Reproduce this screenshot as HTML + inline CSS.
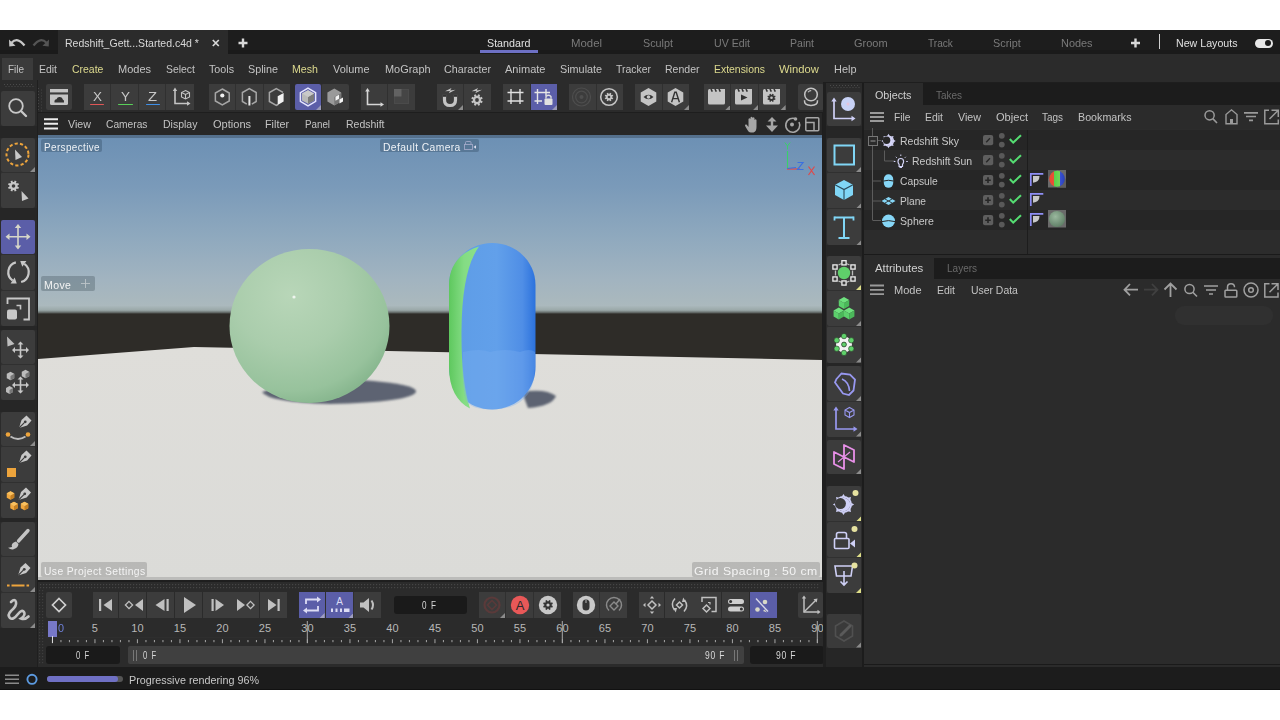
<!DOCTYPE html><html><head><meta charset="utf-8"><style>
*{margin:0;padding:0;box-sizing:border-box}
html,body{width:1280px;height:720px;overflow:hidden;background:#fff;font-family:"Liberation Sans",sans-serif}
#r{position:absolute;left:0;top:0;width:1280px;height:720px}
#r div{position:absolute}
.t{white-space:nowrap;line-height:1;transform-origin:0 0}
</style></head><body><div id="r"><div style="left:0px;top:30px;width:1280px;height:660px;background:#2b2b2b;"></div>
<div style="left:0px;top:30px;width:1280px;height:24px;background:#1d1d1d;"></div>
<div style="left:0px;top:50px;width:1280px;height:4px;background:#1a1a1a;"></div>
<div style="left:58px;top:30px;width:170px;height:24px;background:#2b2b2b;"></div>
<div class="t" style="left:65.00px;top:38.27px;color:#d8d8d8;font-size:11.5px;transform:scaleX(0.915);">Redshift_Gett...Started.c4d *</div>
<div style="left:0px;top:54px;width:1280px;height:26px;background:#2b2b2b;"></div>
<div style="left:2px;top:58px;width:31px;height:22px;background:#3b3b3b;"></div>
<div class="t" style="left:8.00px;top:64.27px;color:#c3c3c3;font-size:11.5px;transform:scaleX(0.865);">File</div>
<div class="t" style="left:39.00px;top:64.27px;color:#c3c3c3;font-size:11.5px;transform:scaleX(0.909);">Edit</div>
<div class="t" style="left:72.00px;top:64.27px;color:#dcd98e;font-size:11.5px;transform:scaleX(0.910);">Create</div>
<div class="t" style="left:118.00px;top:64.27px;color:#c3c3c3;font-size:11.5px;transform:scaleX(0.957);">Modes</div>
<div class="t" style="left:166.00px;top:64.27px;color:#c3c3c3;font-size:11.5px;transform:scaleX(0.906);">Select</div>
<div class="t" style="left:209.00px;top:64.27px;color:#c3c3c3;font-size:11.5px;transform:scaleX(0.933);">Tools</div>
<div class="t" style="left:248.00px;top:64.27px;color:#c3c3c3;font-size:11.5px;transform:scaleX(0.938);">Spline</div>
<div class="t" style="left:292.00px;top:64.27px;color:#dcd98e;font-size:11.5px;transform:scaleX(0.925);">Mesh</div>
<div class="t" style="left:333.00px;top:64.27px;color:#c3c3c3;font-size:11.5px;transform:scaleX(0.951);">Volume</div>
<div class="t" style="left:384.50px;top:64.27px;color:#c3c3c3;font-size:11.5px;transform:scaleX(0.950);">MoGraph</div>
<div class="t" style="left:444.00px;top:64.27px;color:#c3c3c3;font-size:11.5px;transform:scaleX(0.931);">Character</div>
<div class="t" style="left:505.00px;top:64.27px;color:#c3c3c3;font-size:11.5px;transform:scaleX(0.960);">Animate</div>
<div class="t" style="left:560.00px;top:64.27px;color:#c3c3c3;font-size:11.5px;transform:scaleX(0.940);">Simulate</div>
<div class="t" style="left:616.00px;top:64.27px;color:#c3c3c3;font-size:11.5px;transform:scaleX(0.909);">Tracker</div>
<div class="t" style="left:665.00px;top:64.27px;color:#c3c3c3;font-size:11.5px;transform:scaleX(0.915);">Render</div>
<div class="t" style="left:714.00px;top:64.27px;color:#dcd98e;font-size:11.5px;transform:scaleX(0.906);">Extensions</div>
<div class="t" style="left:779.00px;top:64.27px;color:#dcd98e;font-size:11.5px;transform:scaleX(0.976);">Window</div>
<div class="t" style="left:834.00px;top:64.27px;color:#c3c3c3;font-size:11.5px;transform:scaleX(0.949);">Help</div>
<div class="t" style="left:487.00px;top:38.27px;color:#e0e0e0;font-size:11.5px;transform:scaleX(0.931);">Standard</div>
<div class="t" style="left:571.00px;top:38.27px;color:#7a7a7a;font-size:11.5px;transform:scaleX(0.990);">Model</div>
<div class="t" style="left:643.00px;top:38.27px;color:#7a7a7a;font-size:11.5px;transform:scaleX(0.938);">Sculpt</div>
<div class="t" style="left:714.00px;top:38.27px;color:#7a7a7a;font-size:11.5px;transform:scaleX(0.923);">UV Edit</div>
<div class="t" style="left:790.00px;top:38.27px;color:#7a7a7a;font-size:11.5px;transform:scaleX(0.916);">Paint</div>
<div class="t" style="left:854.00px;top:38.27px;color:#7a7a7a;font-size:11.5px;transform:scaleX(0.954);">Groom</div>
<div class="t" style="left:928.00px;top:38.27px;color:#7a7a7a;font-size:11.5px;transform:scaleX(0.880);">Track</div>
<div class="t" style="left:993.00px;top:38.27px;color:#7a7a7a;font-size:11.5px;transform:scaleX(0.944);">Script</div>
<div class="t" style="left:1061.00px;top:38.27px;color:#7a7a7a;font-size:11.5px;transform:scaleX(0.949);">Nodes</div>
<div class="t" style="left:1175.50px;top:38.27px;color:#e0e0e0;font-size:11.5px;transform:scaleX(0.925);">New Layouts</div>
<div style="left:480px;top:50px;width:58px;height:3px;background:#6d70c4;"></div>
<div style="left:0px;top:80px;width:826px;height:33px;background:#2b2b2b;"></div>
<div style="left:46px;top:84px;width:26px;height:26px;background:#3c3c3c;border-radius:2px"></div>
<svg style="position:absolute;left:46px;top:84px;overflow:visible" width="26" height="26" viewBox="0 0 26 26"><rect x="4" y="5" width="18" height="3.4" fill="#c4c4c4"/><path d="M4 10.5H22V19.5Q22 21 20.5 21H5.5Q4 21 4 19.5Z" fill="#c4c4c4"/><path d="M8.5 18.5Q8 15.5 10.5 15.3Q11.5 12.5 14 13Q16.5 13.3 16.8 15.5Q18.5 15.8 18 18.5Z" fill="#333"/></svg>
<div style="left:84px;top:84px;width:26.5px;height:26px;background:#3c3c3c;border-radius:0px"></div>
<div style="left:110.5px;top:84px;width:27.5px;height:26px;background:#3c3c3c;border-radius:0px"></div>
<div style="left:138px;top:84px;width:27.5px;height:26px;background:#3c3c3c;border-radius:0px"></div>
<div style="left:165.5px;top:84px;width:28.5px;height:26px;background:#3c3c3c;border-radius:0px"></div>
<div style="left:84px;top:84px;width:110px;height:26px;border-radius:2px;overflow:hidden"></div>
<div class="t" style="left:92.50px;top:90.00px;color:#c8c8c8;font-size:13px;transform:scaleX(1.034);">X</div>
<div class="t" style="left:120.50px;top:90.00px;color:#c8c8c8;font-size:13px;transform:scaleX(1.034);">Y</div>
<div class="t" style="left:148.00px;top:90.00px;color:#c8c8c8;font-size:13px;transform:scaleX(1.139);">Z</div>
<div style="left:89.5px;top:103.7px;width:14.5px;height:1.8px;background:#e05656;border-radius:1px"></div>
<div style="left:117.5px;top:103.7px;width:15px;height:1.8px;background:#59cf59;border-radius:1px"></div>
<div style="left:145.5px;top:103.7px;width:14.5px;height:1.8px;background:#3f8fe6;border-radius:1px"></div>
<svg style="position:absolute;left:165.5px;top:84px;overflow:visible" width="28" height="26" viewBox="0 0 28 26"><path d="M9 5V19.5H23" fill="none" stroke="#c4c4c4" stroke-width="1.6"/><path d="M9 3.5L6.8 7H11.2Z M24.5 19.5L21 17.3V21.7Z" fill="#c4c4c4"/><path d="M19.5 6.5L23.5 8.5V13L19.5 15L15.5 13V8.5Z M15.5 8.5L19.5 10.5L23.5 8.5 M19.5 10.5V15" fill="none" stroke="#c4c4c4" stroke-width="1.1"/></svg>
<div style="left:209px;top:84px;width:26.69999999999999px;height:26px;background:#3c3c3c;border-radius:0px"></div>
<div style="left:235.7px;top:84px;width:27.30000000000001px;height:26px;background:#3c3c3c;border-radius:0px"></div>
<div style="left:263px;top:84px;width:27.30000000000001px;height:26px;background:#3c3c3c;border-radius:0px"></div>
<div style="left:295px;top:84px;width:26px;height:26px;background:#5b5ea8;border-radius:2px"></div>
<svg style="position:absolute;left:295px;top:84px" width="26" height="26"><path d="M26 21L26 26L21 26Z" fill="#9a9ab8"/></svg>
<div style="left:321px;top:84px;width:28px;height:26px;background:#3c3c3c;border-radius:2px"></div>
<svg style="position:absolute;left:209px;top:84px;overflow:visible" width="27" height="26" viewBox="0 0 27 26"><path d="M13.30 5.00L20.23 9.00L20.23 17.00L13.30 21.00L6.37 17.00L6.37 9.00Z" fill="none" stroke="#a6a6a6" stroke-width="1.5"/><circle cx="13.3" cy="11.5" r="2.1" fill="#f0f0f0"/></svg>
<svg style="position:absolute;left:235.7px;top:84px;overflow:visible" width="27" height="26" viewBox="0 0 27 26"><path d="M10.8 20.2L6.4 17.5V8.5L13.3 4.5L20.2 8.5V17.5L15.8 20.2" fill="none" stroke="#a6a6a6" stroke-width="1.5"/><rect x="12.4" y="12" width="2" height="9.5" fill="#e8e8e8"/></svg>
<svg style="position:absolute;left:263px;top:84px;overflow:visible" width="27" height="26" viewBox="0 0 27 26"><path d="M15 20.5L13.3 21.5L6.4 17.5V8.5L13.3 4.5L20 8.4" fill="none" stroke="#a6a6a6" stroke-width="1.5"/><path d="M14.7 12.2L20.6 9V17.6L14.7 21Z" fill="#f2f2f2"/></svg>
<svg style="position:absolute;left:295px;top:84px;overflow:visible" width="26" height="26" viewBox="0 0 26 26"><path d="M13.00 4.20L20.62 8.60L20.62 17.40L13.00 21.80L5.38 17.40L5.38 8.60Z" fill="none" stroke="#e6e6ff" stroke-width="1.5"/><path d="M13 6.2L19 9.6V16.4L13 19.8L7 16.4V9.6Z" fill="#b9b9b9"/><path d="M13 13L19 9.6V16.4L13 19.8Z" fill="#7b7b7b"/><path d="M13 13L7 9.6L13 6.2L19 9.6Z" fill="#c9c9c9"/></svg>
<svg style="position:absolute;left:321px;top:84px;overflow:visible" width="28" height="26" viewBox="0 0 28 26"><path d="M13.3 4.5L20.2 8.5V17.5L13.3 21.5L6.4 17.5V8.5Z" fill="#9a9a9a"/><path d="M13.3 13L20.2 9V17.5L13.3 21.5Z" fill="#777"/><path d="M14.5 12.8L18 10.8V14.8L14.5 16.8Z M18.5 15.5L22 13.5V17.5L18.5 19.5Z" fill="#f4f4f4"/></svg>
<div style="left:361px;top:84px;width:26.600000000000023px;height:26px;background:#3c3c3c;border-radius:0px"></div>
<div style="left:387.6px;top:84px;width:27.19999999999999px;height:26px;background:#3c3c3c;border-radius:0px"></div>
<svg style="position:absolute;left:361px;top:84px;overflow:visible" width="27" height="26" viewBox="0 0 27 26"><path d="M6.5 6V20.5H21" fill="none" stroke="#d6d6d6" stroke-width="1.6"/><path d="M6.5 4L4.2 7.5H8.8Z M23 20.5L19.5 18.2V22.8Z" fill="#d6d6d6"/></svg>
<svg style="position:absolute;left:387.6px;top:84px;overflow:visible" width="27" height="26" viewBox="0 0 27 26"><rect x="6.5" y="5.5" width="14" height="14" fill="#454545" stroke="#4b4b4b"/><rect x="6" y="5" width="7.5" height="7.5" fill="#626262"/></svg>
<div style="left:437px;top:84px;width:26px;height:26px;background:#3c3c3c;border-radius:0px"></div>
<svg style="position:absolute;left:437px;top:84px" width="26" height="26"><path d="M26 21L26 26L21 26Z" fill="#8c8c8c"/></svg>
<div style="left:463px;top:84px;width:27.80000000000001px;height:26px;background:#3c3c3c;border-radius:0px"></div>
<svg style="position:absolute;left:437px;top:84px;overflow:visible" width="26" height="26" viewBox="0 0 26 26"><path d="M7.5 10.5V16Q7.5 21.5 13 21.5Q18.5 21.5 18.5 16V10.5" fill="none" stroke="#c4c4c4" stroke-width="3.2"/><rect x="5.9" y="10.2" width="3.2" height="2.6" fill="#333"/><rect x="16.9" y="10.2" width="3.2" height="2.6" fill="#333"/><path d="M8 7.2L14.5 4L13.2 6.6L18.5 5.8L11.8 9.2L13 6.9Z" fill="#c4c4c4"/></svg>
<svg style="position:absolute;left:463px;top:84px;overflow:visible" width="28" height="26" viewBox="0 0 28 26"><path d="M14.00 11.80L14.64 11.85L15.24 10.33L17.13 11.12L16.48 12.61L16.97 13.03L17.39 13.52L18.88 12.87L19.67 14.76L18.15 15.36L18.20 16.00L18.15 16.64L19.67 17.24L18.88 19.13L17.39 18.48L16.97 18.97L16.48 19.39L17.13 20.88L15.24 21.67L14.64 20.15L14.00 20.20L13.36 20.15L12.76 21.67L10.87 20.88L11.52 19.39L11.03 18.97L10.61 18.48L9.12 19.13L8.33 17.24L9.85 16.64L9.80 16.00L9.85 15.36L8.33 14.76L9.12 12.87L10.61 13.52L11.03 13.03L11.52 12.61L10.87 11.12L12.76 10.33L13.36 11.85Z" fill="#c4c4c4"/><circle cx="14" cy="16" r="1.9" fill="#3c3c3c"/><path d="M8.5 7.2L15 4L13.7 6.6L19 5.8L12.3 9.2L13.5 6.9Z" fill="#c4c4c4"/></svg>
<div style="left:503px;top:84px;width:27px;height:26px;background:#3c3c3c;border-radius:0px"></div>
<div style="left:530px;top:84px;width:27px;height:26px;background:#5b5ea8;border-radius:0px"></div>
<svg style="position:absolute;left:530px;top:84px" width="27" height="26"><path d="M27 21L27 26L22 26Z" fill="#9a9ab8"/></svg>
<svg style="position:absolute;left:503px;top:84px;overflow:visible" width="27" height="26" viewBox="0 0 27 26"><path d="M8 5V20 M17 5V20 M4.5 8.5H20.5 M4.5 17H20.5" stroke="#e0e0e0" stroke-width="1.4"/></svg>
<svg style="position:absolute;left:530px;top:84px;overflow:visible" width="27" height="26" viewBox="0 0 27 26"><path d="M7.5 5V20 M16 5V12 M4.5 8.5H20 M4.5 17H12" stroke="#e6e6e6" stroke-width="1.4"/><rect x="14.5" y="14.5" width="8" height="6.5" rx="1" fill="#e0e0e0"/><path d="M16 14.5V12.5Q18.5 10 21 12.5V14.5" fill="none" stroke="#e0e0e0" stroke-width="1.3"/></svg>
<div style="left:569px;top:84px;width:27px;height:26px;background:#3c3c3c;border-radius:0px"></div>
<div style="left:596px;top:84px;width:27px;height:26px;background:#3c3c3c;border-radius:0px"></div>
<svg style="position:absolute;left:569px;top:84px;overflow:visible" width="27" height="26" viewBox="0 0 27 26"><circle cx="12.5" cy="13" r="9" fill="none" stroke="#4e4e4e" stroke-width="1.2"/><circle cx="12.5" cy="13" r="5.8" fill="none" stroke="#4e4e4e" stroke-width="1.2"/><circle cx="12.5" cy="13" r="2" fill="#4e4e4e"/></svg>
<svg style="position:absolute;left:596px;top:84px;overflow:visible" width="27" height="26" viewBox="0 0 27 26"><circle cx="13" cy="13" r="8.3" fill="none" stroke="#c4c4c4" stroke-width="1.6"/><path d="M13.00 9.80L13.49 9.84L13.94 8.70L15.37 9.29L14.89 10.42L15.26 10.74L15.58 11.11L16.71 10.63L17.30 12.06L16.16 12.51L16.20 13.00L16.16 13.49L17.30 13.94L16.71 15.37L15.58 14.89L15.26 15.26L14.89 15.58L15.37 16.71L13.94 17.30L13.49 16.16L13.00 16.20L12.51 16.16L12.06 17.30L10.63 16.71L11.11 15.58L10.74 15.26L10.42 14.89L9.29 15.37L8.70 13.94L9.84 13.49L9.80 13.00L9.84 12.51L8.70 12.06L9.29 10.63L10.42 11.11L10.74 10.74L11.11 10.42L10.63 9.29L12.06 8.70L12.51 9.84Z" fill="#c4c4c4"/><circle cx="13" cy="13" r="1.3" fill="#3c3c3c"/></svg>
<div style="left:635px;top:84px;width:27px;height:26px;background:#3c3c3c;border-radius:0px"></div>
<div style="left:662px;top:84px;width:27px;height:26px;background:#3c3c3c;border-radius:0px"></div>
<svg style="position:absolute;left:662px;top:84px" width="27" height="26"><path d="M27 21L27 26L22 26Z" fill="#8c8c8c"/></svg>
<svg style="position:absolute;left:635px;top:84px;overflow:visible" width="27" height="26" viewBox="0 0 27 26"><path d="M13.50 4.00L21.29 8.50L21.29 17.50L13.50 22.00L5.71 17.50L5.71 8.50Z" fill="#c4c4c4"/><path d="M8.5 13Q13.5 8.5 18.5 13Q13.5 17.5 8.5 13Z" fill="#333"/><circle cx="13.5" cy="13" r="1.8" fill="#c4c4c4"/></svg>
<svg style="position:absolute;left:662px;top:84px;overflow:visible" width="27" height="26" viewBox="0 0 27 26"><path d="M13.50 4.00L21.29 8.50L21.29 17.50L13.50 22.00L5.71 17.50L5.71 8.50Z" fill="#c4c4c4"/><path d="M9.6 18.3L12.8 8.2H14.2L17.4 18.3 M10.9 14.6H16.1" fill="none" stroke="#333" stroke-width="1.4"/></svg>
<div style="left:704px;top:84px;width:26.299999999999955px;height:26px;background:#3c3c3c;border-radius:0px"></div>
<svg style="position:absolute;left:704px;top:84px" width="26.299999999999955" height="26"><path d="M26.299999999999955 21L26.299999999999955 26L21.299999999999955 26Z" fill="#8c8c8c"/></svg>
<div style="left:730.3px;top:84px;width:28.100000000000023px;height:26px;background:#3c3c3c;border-radius:0px"></div>
<svg style="position:absolute;left:730.3px;top:84px" width="28.100000000000023" height="26"><path d="M28.100000000000023 21L28.100000000000023 26L23.100000000000023 26Z" fill="#8c8c8c"/></svg>
<div style="left:758.4px;top:84px;width:27.600000000000023px;height:26px;background:#3c3c3c;border-radius:0px"></div>
<svg style="position:absolute;left:758.4px;top:84px" width="27.600000000000023" height="26"><path d="M27.600000000000023 21L27.600000000000023 26L22.600000000000023 26Z" fill="#8c8c8c"/></svg>
<svg style="position:absolute;left:704px;top:84px;overflow:visible" width="26" height="26" viewBox="0 0 26 26"><path d="M4 6.5Q4 5 5.5 5H21V19Q21 20.5 19.5 20.5H5.5Q4 20.5 4 19Z" fill="#c4c4c4"/><path d="M7 5L8.3 7.6 M11 5L12.3 7.6 M15 5L16.3 7.6" stroke="#333" stroke-width="1.6"/></svg>
<svg style="position:absolute;left:731px;top:84px;overflow:visible" width="26" height="26" viewBox="0 0 26 26"><path d="M4 6.5Q4 5 5.5 5H21V19Q21 20.5 19.5 20.5H5.5Q4 20.5 4 19Z" fill="#c4c4c4"/><path d="M7 5L8.3 7.6 M11 5L12.3 7.6 M15 5L16.3 7.6" stroke="#333" stroke-width="1.6"/><path d="M10 10.5L16.5 13.5L10 16.5Z" fill="#333"/></svg>
<svg style="position:absolute;left:759px;top:84px;overflow:visible" width="26" height="26" viewBox="0 0 26 26"><path d="M4 6.5Q4 5 5.5 5H21V19Q21 20.5 19.5 20.5H5.5Q4 20.5 4 19Z" fill="#c4c4c4"/><path d="M7 5L8.3 7.6 M11 5L12.3 7.6 M15 5L16.3 7.6" stroke="#333" stroke-width="1.6"/><path d="M12.50 10.70L12.97 10.74L13.40 9.70L14.76 10.26L14.33 11.30L14.69 11.61L15.00 11.97L16.04 11.54L16.60 12.90L15.56 13.33L15.60 13.80L15.56 14.27L16.60 14.70L16.04 16.06L15.00 15.63L14.69 15.99L14.33 16.30L14.76 17.34L13.40 17.90L12.97 16.86L12.50 16.90L12.03 16.86L11.60 17.90L10.24 17.34L10.67 16.30L10.31 15.99L10.00 15.63L8.96 16.06L8.40 14.70L9.44 14.27L9.40 13.80L9.44 13.33L8.40 12.90L8.96 11.54L10.00 11.97L10.31 11.61L10.67 11.30L10.24 10.26L11.60 9.70L12.03 10.74Z" fill="#333"/><circle cx="12.5" cy="13.8" r="1.3" fill="#c4c4c4"/></svg>
<div style="left:798px;top:84px;width:26px;height:26px;background:#3c3c3c;border-radius:2px"></div>
<svg style="position:absolute;left:798px;top:84px;overflow:visible" width="26" height="26" viewBox="0 0 26 26"><circle cx="13" cy="10.5" r="6.3" fill="none" stroke="#c4c4c4" stroke-width="1.5"/><path d="M10 8.3Q11.2 6.5 13.2 6.6" fill="none" stroke="#c4c4c4" stroke-width="1.1"/><path d="M6.5 16.3Q6 21.5 13 21.5Q20 21.5 19.5 16.3" fill="none" stroke="#c4c4c4" stroke-width="1.5"/></svg>
<div style="left:0px;top:80px;width:37px;height:587px;background:#2b2b2b;"></div>
<div style="left:823px;top:80px;width:40px;height:587px;background:#2b2b2b;"></div>
<div style="left:0px;top:126px;width:37px;height:11.5px;background:#262626;"></div>
<div style="left:0px;top:208px;width:37px;height:12px;background:#262626;"></div>
<div style="left:0px;top:326px;width:37px;height:4px;background:#262626;"></div>
<div style="left:0px;top:400px;width:37px;height:11.5px;background:#262626;"></div>
<div style="left:0px;top:518px;width:37px;height:3.5px;background:#262626;"></div>
<div style="left:0px;top:628px;width:37px;height:39px;background:#262626;"></div>
<div style="left:823px;top:80px;width:40px;height:2.5px;background:#2b2b2b;"></div>
<div style="left:826px;top:126px;width:36px;height:11.5px;background:#262626;"></div>
<div style="left:826px;top:245px;width:36px;height:10.5px;background:#262626;"></div>
<div style="left:826px;top:362.5px;width:36px;height:3.5px;background:#262626;"></div>
<div style="left:826px;top:474px;width:36px;height:12px;background:#262626;"></div>
<div style="left:826px;top:593px;width:36px;height:21px;background:#262626;"></div>
<div style="left:826px;top:647.5px;width:36px;height:19.5px;background:#262626;"></div>
<div style="left:1px;top:91px;width:34px;height:35px;background:#3c3c3c;border-radius:2px"></div>
<svg style="position:absolute;left:1px;top:91px;overflow:visible" width="34" height="35" viewBox="0 0 34 35"><circle cx="15" cy="15" r="6.8" fill="none" stroke="#c8c8c8" stroke-width="1.8"/><path d="M20 20L25 25" stroke="#c8c8c8" stroke-width="2.4" stroke-linecap="round"/></svg>
<div style="left:1px;top:138px;width:34px;height:34px;background:#3c3c3c;border-radius:2px"></div>
<svg style="position:absolute;left:1px;top:138px" width="34" height="34"><path d="M34 29L34 34L29 34Z" fill="#8c8c8c"/></svg>
<div style="left:1px;top:172px;width:34px;height:36px;background:#3c3c3c;border-radius:2px"></div>
<svg style="position:absolute;left:1px;top:138px;overflow:visible" width="34" height="34" viewBox="0 0 34 34"><circle cx="16.5" cy="16.5" r="11" fill="none" stroke="#eda43c" stroke-width="2" stroke-dasharray="3.2 2.2"/><path d="M14 11.5L21 19L14.5 22Z" fill="#c8c8c8"/></svg>
<svg style="position:absolute;left:1px;top:172px;overflow:visible" width="34" height="36" viewBox="0 0 34 36"><path d="M12.50 9.90L13.13 9.95L13.70 8.53L15.52 9.28L14.92 10.69L15.40 11.10L15.81 11.58L17.22 10.98L17.97 12.80L16.55 13.37L16.60 14.00L16.55 14.63L17.97 15.20L17.22 17.02L15.81 16.42L15.40 16.90L14.92 17.31L15.52 18.72L13.70 19.47L13.13 18.05L12.50 18.10L11.87 18.05L11.30 19.47L9.48 18.72L10.08 17.31L9.60 16.90L9.19 16.42L7.78 17.02L7.03 15.20L8.45 14.63L8.40 14.00L8.45 13.37L7.03 12.80L7.78 10.98L9.19 11.58L9.60 11.10L10.08 10.69L9.48 9.28L11.30 8.53L11.87 9.95Z" fill="#c8c8c8"/><circle cx="12.5" cy="14" r="1.8" fill="#3c3c3c"/><path d="M20.5 19L27.5 26.5L21 29Z" fill="#c8c8c8"/></svg>
<div style="left:1px;top:220px;width:34px;height:34px;background:#5b5ea8;border-radius:2px"></div>
<div style="left:1px;top:254px;width:34px;height:36px;background:#3c3c3c;border-radius:2px"></div>
<div style="left:1px;top:290px;width:34px;height:36px;background:#3c3c3c;border-radius:2px"></div>
<svg style="position:absolute;left:1px;top:220px;overflow:visible" width="34" height="34" viewBox="0 0 34 34"><path d="M17 6V28 M6 16.8H28" stroke="#d6d6c8" stroke-width="1.6"/><path d="M17 4L13.8 8H20.2Z M17 29.5L13.8 25.5H20.2Z M4.5 16.8L8.5 13.6V20Z M29.5 16.8L25.5 13.6V20Z" fill="#d6d6c8"/></svg>
<svg style="position:absolute;left:1px;top:254px;overflow:visible" width="34" height="36" viewBox="0 0 34 36"><path d="M14.86 8.35A10.2 10.2 0 0 0 11.65 26.56 M20.14 28.05A10.2 10.2 0 0 0 23.35 9.84" fill="none" stroke="#c8c8c8" stroke-width="2.2"/><path d="M15.75 29.42L9.58 29.50L13.71 23.61Z M19.25 6.98L25.42 6.90L21.29 12.79Z" fill="#c8c8c8"/></svg>
<svg style="position:absolute;left:1px;top:290px;overflow:visible" width="34" height="36" viewBox="0 0 34 36"><path d="M6.5 14V8.5H28V29.5H22.5" fill="none" stroke="#c8c8c8" stroke-width="1.8"/><path d="M15.5 15.5H19.5V19.5" fill="none" stroke="#c8c8c8" stroke-width="1.6"/><rect x="6" y="19.5" width="10" height="10" rx="2" fill="#c8c8c8"/></svg>
<div style="left:1px;top:330px;width:34px;height:34px;background:#3c3c3c;border-radius:2px"></div>
<div style="left:1px;top:364px;width:34px;height:36px;background:#3c3c3c;border-radius:2px"></div>
<svg style="position:absolute;left:1px;top:330px;overflow:visible" width="34" height="34" viewBox="0 0 34 34"><path d="M6 6.5L13.5 14L6.5 16.5Z" fill="#bdbdbd"/><path d="M19.5 13.5V26.5 M13.0 20H26.0" stroke="#c8c8c8" stroke-width="1.6"/><path d="M19.5 11.5L16.5 14.5H22.5Z M19.5 28.5L16.5 25.5H22.5Z M11.0 20L14.0 17V23Z M28.0 20L25.0 17V23Z" fill="#c8c8c8"/></svg>
<svg style="position:absolute;left:1px;top:364px;overflow:visible" width="34" height="36" viewBox="0 0 34 36"><path d="M9.5 7.7L13.241 9.85V14.15L9.5 16.3L5.759 14.15V9.85Z" fill="#bcbcbc"/><path d="M9.5 12L13.241 9.85V14.15L9.5 16.3Z" fill="#777"/><path d="M24.5 5.7L28.241 7.85V12.15L24.5 14.3L20.759 12.15V7.85Z" fill="#bcbcbc"/><path d="M24.5 10L28.241 7.85V12.15L24.5 14.3Z" fill="#777"/><path d="M8.5 22L11.98 24.0V28.0L8.5 30L5.02 28.0V24.0Z" fill="#bcbcbc"/><path d="M8.5 26L11.98 24.0V28.0L8.5 30Z" fill="#777"/><path d="M19.5 14.5V27.5 M13.0 21H26.0" stroke="#c8c8c8" stroke-width="1.6"/><path d="M19.5 12.5L16.5 15.5H22.5Z M19.5 29.5L16.5 26.5H22.5Z M11.0 21L14.0 18V24Z M28.0 21L25.0 18V24Z" fill="#c8c8c8"/></svg>
<div style="left:1px;top:412px;width:34px;height:34px;background:#3c3c3c;border-radius:2px"></div>
<svg style="position:absolute;left:1px;top:412px" width="34" height="34"><path d="M34 29L34 34L29 34Z" fill="#8c8c8c"/></svg>
<div style="left:1px;top:446px;width:34px;height:36px;background:#3c3c3c;border-radius:2px"></div>
<div style="left:1px;top:482px;width:34px;height:36px;background:#3c3c3c;border-radius:2px"></div>
<svg style="position:absolute;left:1px;top:412px;overflow:visible" width="34" height="34" viewBox="0 0 34 34"><g transform="translate(18 16) scale(1.25)"><path d="M0 0L2 -6.5L6 -10L10 -6L6.5 -2Z" fill="#c8c8c8"/><path d="M0 0L4.5 -4.5" stroke="#3c3c3c" stroke-width="0.9"/><circle cx="5" cy="-5" r="1.1" fill="#3c3c3c"/></g><circle cx="7" cy="22.5" r="2.3" fill="#eda43c"/><circle cx="27" cy="22.5" r="2.3" fill="#eda43c"/><path d="M9.5 24.5Q17 29.5 24.5 24.5" fill="none" stroke="#bdbdbd" stroke-width="1.8"/></svg>
<svg style="position:absolute;left:1px;top:446px;overflow:visible" width="34" height="36" viewBox="0 0 34 36"><g transform="translate(18 17) scale(1.25)"><path d="M0 0L2 -6.5L6 -10L10 -6L6.5 -2Z" fill="#c8c8c8"/><path d="M0 0L4.5 -4.5" stroke="#3c3c3c" stroke-width="0.9"/><circle cx="5" cy="-5" r="1.1" fill="#3c3c3c"/></g><rect x="6" y="22" width="9" height="9" fill="#eda43c"/></svg>
<svg style="position:absolute;left:1px;top:482px;overflow:visible" width="34" height="36" viewBox="0 0 34 36"><path d="M9.5 9.2L13.241 11.35V15.65L9.5 17.8L5.759 15.65V11.35Z" fill="#f0a840"/><path d="M9.5 13.5L13.241 11.35V15.65L9.5 17.8Z" fill="#c47f22"/><path d="M9.5 13.5L13.241 11.35L9.5 9.2L5.759 11.35Z" fill="#f8c060"/><path d="M13 19.7L16.741 21.85V26.15L13 28.3L9.259 26.15V21.85Z" fill="#f0a840"/><path d="M13 24L16.741 21.85V26.15L13 28.3Z" fill="#c47f22"/><path d="M13 24L16.741 21.85L13 19.7L9.259 21.85Z" fill="#f8c060"/><path d="M23.5 19.7L27.241 21.85V26.15L23.5 28.3L19.759 26.15V21.85Z" fill="#f0a840"/><path d="M23.5 24L27.241 21.85V26.15L23.5 28.3Z" fill="#c47f22"/><path d="M23.5 24L27.241 21.85L23.5 19.7L19.759 21.85Z" fill="#f8c060"/><g transform="translate(17.5 18) scale(1.25)"><path d="M0 0L2 -6.5L6 -10L10 -6L6.5 -2Z" fill="#c8c8c8"/><path d="M0 0L4.5 -4.5" stroke="#3c3c3c" stroke-width="0.9"/><circle cx="5" cy="-5" r="1.1" fill="#3c3c3c"/></g></svg>
<div style="left:1px;top:522px;width:34px;height:34px;background:#3c3c3c;border-radius:2px"></div>
<div style="left:1px;top:556px;width:34px;height:36px;background:#3c3c3c;border-radius:2px"></div>
<svg style="position:absolute;left:1px;top:556px" width="34" height="36"><path d="M34 31L34 36L29 36Z" fill="#8c8c8c"/></svg>
<div style="left:1px;top:592px;width:34px;height:36px;background:#3c3c3c;border-radius:2px"></div>
<svg style="position:absolute;left:1px;top:592px" width="34" height="36"><path d="M34 31L34 36L29 36Z" fill="#8c8c8c"/></svg>
<svg style="position:absolute;left:1px;top:522px;overflow:visible" width="34" height="34" viewBox="0 0 34 34"><path d="M27 8.5L17.5 19" stroke="#c4c4c4" stroke-width="3.4" stroke-linecap="round"/><path d="M15 19.5Q9.5 21 11 25Q7.5 26 7 25.8Q10.5 28.5 13 27Q17 26 17.5 22Z" fill="#c4c4c4"/></svg>
<svg style="position:absolute;left:1px;top:556px;overflow:visible" width="34" height="36" viewBox="0 0 34 36"><g transform="translate(17 19.5) scale(1.25)"><path d="M0 0L2 -6.5L6 -10L10 -6L6.5 -2Z" fill="#c8c8c8"/><path d="M0 0L4.5 -4.5" stroke="#3c3c3c" stroke-width="0.9"/><circle cx="5" cy="-5" r="1.1" fill="#3c3c3c"/></g><rect x="6" y="28.5" width="2.6" height="2" fill="#eda43c"/><rect x="10.5" y="28.5" width="13" height="2" fill="#eda43c"/><rect x="25.5" y="28.5" width="2.6" height="2" fill="#eda43c"/></svg>
<svg style="position:absolute;left:1px;top:592px;overflow:visible" width="34" height="36" viewBox="0 0 34 36"><path d="M10 10Q14 6 15 10Q16 14 10 19Q6 23 9 26Q12 28.5 17 22Q21 17 23 20Q25 23 20 26.5Q24 28 27.5 24.5" fill="none" stroke="#c4c4c4" stroke-width="2.6" stroke-linecap="round"/></svg>
<div style="left:827px;top:92px;width:34px;height:34px;background:#3c3c3c;border-radius:2px"></div>
<svg style="position:absolute;left:827px;top:92px;overflow:visible" width="34" height="34" viewBox="0 0 34 34"><circle cx="21" cy="12" r="7" fill="#c8d2f6"/><circle cx="21" cy="12" r="1.5" fill="#e4c4dc"/><path d="M7 8V26.5H26" fill="none" stroke="#cfd0f6" stroke-width="1.7"/><path d="M7 5.5L4.3 9.5H9.7Z M28.5 26.5L24.5 23.8V29.2Z" fill="#cfd0f6"/></svg>
<div style="left:827px;top:138px;width:34px;height:34px;background:#3c3c3c;border-radius:2px"></div>
<svg style="position:absolute;left:827px;top:138px" width="34" height="34"><path d="M34 29L34 34L29 34Z" fill="#8c8c8c"/></svg>
<div style="left:827px;top:172px;width:34px;height:36.5px;background:#3c3c3c;border-radius:2px"></div>
<svg style="position:absolute;left:827px;top:172px" width="34" height="36.5"><path d="M34 31.5L34 36.5L29 36.5Z" fill="#8c8c8c"/></svg>
<div style="left:827px;top:208.5px;width:34px;height:36.5px;background:#3c3c3c;border-radius:2px"></div>
<svg style="position:absolute;left:827px;top:208.5px" width="34" height="36.5"><path d="M34 31.5L34 36.5L29 36.5Z" fill="#8c8c8c"/></svg>
<svg style="position:absolute;left:827px;top:138px;overflow:visible" width="34" height="34" viewBox="0 0 34 34"><rect x="7.5" y="7.5" width="19.5" height="19" fill="none" stroke="#80d6f6" stroke-width="2"/></svg>
<svg style="position:absolute;left:827px;top:172px;overflow:visible" width="34" height="36" viewBox="0 0 34 36"><path d="M17 8L26 12.8V23L17 28L8 23V12.8Z" fill="#80d6f6"/><path d="M8 12.8L17 17.6L26 12.8 M17 17.6V28" fill="none" stroke="#2a4a5a" stroke-width="1.1"/></svg>
<svg style="position:absolute;left:827px;top:208.5px;overflow:visible" width="34" height="36" viewBox="0 0 34 36"><path d="M7.5 8.5H26.5 M17 8.5V29 M11.5 29H22.5" stroke="#80d6f6" stroke-width="2"/><path d="M7.5 7.5V11.5 M26.5 7.5V11.5" stroke="#80d6f6" stroke-width="1.8"/></svg>
<div style="left:827px;top:256px;width:34px;height:34px;background:#3c3c3c;border-radius:2px"></div>
<svg style="position:absolute;left:827px;top:256px" width="34" height="34"><path d="M34 29L34 34L29 34Z" fill="#dede88"/></svg>
<div style="left:827px;top:290px;width:34px;height:36px;background:#3c3c3c;border-radius:2px"></div>
<svg style="position:absolute;left:827px;top:290px" width="34" height="36"><path d="M34 31L34 36L29 36Z" fill="#8c8c8c"/></svg>
<div style="left:827px;top:326px;width:34px;height:36.5px;background:#3c3c3c;border-radius:2px"></div>
<svg style="position:absolute;left:827px;top:326px" width="34" height="36.5"><path d="M34 31.5L34 36.5L29 36.5Z" fill="#8c8c8c"/></svg>
<svg style="position:absolute;left:827px;top:256px;overflow:visible" width="34" height="34" viewBox="0 0 34 34"><path d="M8.5 14.5V19.5 M25.5 14.5V19.5" stroke="#bdbdbd" stroke-width="1.3"/><path d="M11.5 9Q14 7.8 14.5 7.8 M22.5 9Q20 7.8 19.5 7.8 M11.5 25Q14 26.2 14.5 26.2 M22.5 25Q20 26.2 19.5 26.2" stroke="#bdbdbd" stroke-width="1.1" fill="none"/><circle cx="17" cy="17" r="6.2" fill="#5fd06a"/><rect x="14.9" y="4.699999999999999" width="4.2" height="4.2" fill="#3c3c3c" stroke="#f0f0f0" stroke-width="1.3"/><rect x="14.9" y="24.9" width="4.2" height="4.2" fill="#3c3c3c" stroke="#f0f0f0" stroke-width="1.3"/><rect x="5.9" y="8.9" width="4.2" height="4.2" fill="#3c3c3c" stroke="#f0f0f0" stroke-width="1.3"/><rect x="23.9" y="8.9" width="4.2" height="4.2" fill="#3c3c3c" stroke="#f0f0f0" stroke-width="1.3"/><rect x="5.9" y="20.9" width="4.2" height="4.2" fill="#3c3c3c" stroke="#f0f0f0" stroke-width="1.3"/><rect x="23.9" y="20.9" width="4.2" height="4.2" fill="#3c3c3c" stroke="#f0f0f0" stroke-width="1.3"/></svg>
<svg style="position:absolute;left:827px;top:290px;overflow:visible" width="34" height="36" viewBox="0 0 34 36"><path d="M17 7L22.22 10.0L17 13L11.780000000000001 10.0Z" fill="#6fe27e"/><path d="M11.780000000000001 10.0L17 13L17 19L11.780000000000001 16.0Z" fill="#5cd06c"/><path d="M17 13L22.22 10.0L22.22 16.0L17 19Z" fill="#4bb85a"/><path d="M11.8 17.5L17.02 20.5L11.8 23.5L6.580000000000001 20.5Z" fill="#6fe27e"/><path d="M6.580000000000001 20.5L11.8 23.5L11.8 29.5L6.580000000000001 26.5Z" fill="#5cd06c"/><path d="M11.8 23.5L17.02 20.5L17.02 26.5L11.8 29.5Z" fill="#4bb85a"/><path d="M22.2 17.5L27.419999999999998 20.5L22.2 23.5L16.98 20.5Z" fill="#6fe27e"/><path d="M16.98 20.5L22.2 23.5L22.2 29.5L16.98 26.5Z" fill="#5cd06c"/><path d="M22.2 23.5L27.419999999999998 20.5L27.419999999999998 26.5L22.2 29.5Z" fill="#4bb85a"/></svg>
<svg style="position:absolute;left:827px;top:326px;overflow:visible" width="34" height="36" viewBox="0 0 34 36"><path d="M17.00 12.20L18.12 12.30L19.12 10.58L22.80 12.70L21.81 14.43L22.46 15.35L22.93 16.37L24.92 16.38L24.92 20.62L22.93 20.63L22.46 21.65L21.81 22.57L22.80 24.30L19.12 26.42L18.12 24.70L17.00 24.80L15.88 24.70L14.88 26.42L11.20 24.30L12.19 22.57L11.54 21.65L11.07 20.63L9.08 20.62L9.08 16.38L11.07 16.37L11.54 15.35L12.19 14.43L11.20 12.70L14.88 10.58L15.88 12.30Z" fill="#f4f4f4"/><circle cx="17" cy="18.5" r="0.1" fill="#f4f4f4"/><circle cx="17.00" cy="10.10" r="2.7" fill="#5fd06a" stroke="#2a3a2a" stroke-width="0.6"/><circle cx="24.27" cy="14.30" r="2.7" fill="#5fd06a" stroke="#2a3a2a" stroke-width="0.6"/><circle cx="24.27" cy="22.70" r="2.7" fill="#5fd06a" stroke="#2a3a2a" stroke-width="0.6"/><circle cx="17.00" cy="26.90" r="2.7" fill="#5fd06a" stroke="#2a3a2a" stroke-width="0.6"/><circle cx="9.73" cy="22.70" r="2.7" fill="#5fd06a" stroke="#2a3a2a" stroke-width="0.6"/><circle cx="9.73" cy="14.30" r="2.7" fill="#5fd06a" stroke="#2a3a2a" stroke-width="0.6"/><circle cx="17" cy="18.5" r="2.4" fill="#5fd06a" stroke="#2a3a2a" stroke-width="0.8"/></svg>
<div style="left:827px;top:366px;width:34px;height:35px;background:#3c3c3c;border-radius:2px"></div>
<svg style="position:absolute;left:827px;top:366px" width="34" height="35"><path d="M34 30L34 35L29 35Z" fill="#8c8c8c"/></svg>
<div style="left:827px;top:401px;width:34px;height:35.5px;background:#3c3c3c;border-radius:2px"></div>
<svg style="position:absolute;left:827px;top:401px" width="34" height="35.5"><path d="M34 30.5L34 35.5L29 35.5Z" fill="#8c8c8c"/></svg>
<div style="left:827px;top:440px;width:34px;height:34px;background:#3c3c3c;border-radius:2px"></div>
<svg style="position:absolute;left:827px;top:440px" width="34" height="34"><path d="M34 29L34 34L29 34Z" fill="#8c8c8c"/></svg>
<svg style="position:absolute;left:827px;top:366px;overflow:visible" width="34" height="35" viewBox="0 0 34 35"><path d="M9.5 13L14.5 7.5L23 8.5L28 13.5L26.5 24.5L22 29L16 27.5L12 22L8 16.5Z" fill="none" stroke="#9898f0" stroke-width="1.8"/><path d="M15 13Q22 16 22.5 25" fill="none" stroke="#9898f0" stroke-width="1.6"/></svg>
<svg style="position:absolute;left:827px;top:401px;overflow:visible" width="34" height="35" viewBox="0 0 34 35"><path d="M9 8V28H28" fill="none" stroke="#9898f0" stroke-width="1.7"/><path d="M9 5.5L6.3 9.5H11.7Z M30.5 28L26.5 25.3V30.7Z" fill="#9898f0"/><path d="M22.5 6.5L27 9V14L22.5 16.5L18 14V9Z M18 9L22.5 11.5L27 9 M22.5 11.5V16.5" fill="none" stroke="#9898f0" stroke-width="1.1"/></svg>
<svg style="position:absolute;left:827px;top:440px;overflow:visible" width="34" height="34" viewBox="0 0 34 34"><path d="M7 12L17 17V29L7 24Z M17 5L27 10V22L17 17Z" fill="none" stroke="#e890e8" stroke-width="1.8" stroke-linejoin="round"/><path d="M11 22L23 12" stroke="#e890e8" stroke-width="1.1"/></svg>
<div style="left:827px;top:486px;width:34px;height:35.5px;background:#3c3c3c;border-radius:2px"></div>
<svg style="position:absolute;left:827px;top:486px" width="34" height="35.5"><path d="M34 30.5L34 35.5L29 35.5Z" fill="#dede88"/></svg>
<div style="left:827px;top:521.5px;width:34px;height:35.5px;background:#3c3c3c;border-radius:2px"></div>
<svg style="position:absolute;left:827px;top:521.5px" width="34" height="35.5"><path d="M34 30.5L34 35.5L29 35.5Z" fill="#dede88"/></svg>
<div style="left:827px;top:557px;width:34px;height:36px;background:#3c3c3c;border-radius:2px"></div>
<svg style="position:absolute;left:827px;top:557px" width="34" height="36"><path d="M34 31L34 36L29 36Z" fill="#dede88"/></svg>
<svg style="position:absolute;left:827px;top:486px;overflow:visible" width="34" height="36" viewBox="0 0 34 36"><circle cx="16.5" cy="18.5" r="7.6" fill="none" stroke="#cfd0f6" stroke-width="1.8"/><path d="M14.70 10.71L16.50 7.90L18.30 10.71Z" fill="#cfd0f6"/><path d="M20.74 11.72L24.00 11.00L23.28 14.26Z" fill="#cfd0f6"/><path d="M24.29 16.70L27.10 18.50L24.29 20.30Z" fill="#cfd0f6"/><path d="M23.28 22.74L24.00 26.00L20.74 25.28Z" fill="#cfd0f6"/><path d="M18.30 26.29L16.50 29.10L14.70 26.29Z" fill="#cfd0f6"/><path d="M12.26 25.28L9.00 26.00L9.72 22.74Z" fill="#cfd0f6"/><path d="M8.71 20.30L5.90 18.50L8.71 16.70Z" fill="#cfd0f6"/><path d="M9.72 14.26L9.00 11.00L12.26 11.72Z" fill="#cfd0f6"/><circle cx="16.5" cy="18.5" r="6.8" fill="#cfd0f6"/><circle cx="13.4" cy="17.6" r="5.5" fill="#3c3c3c"/><circle cx="28.5" cy="7" r="3" fill="#e6e2a0"/></svg>
<svg style="position:absolute;left:827px;top:521.5px;overflow:visible" width="34" height="36" viewBox="0 0 34 36"><path d="M9.5 16.5V12.5Q9.5 10.5 11.5 10.5H17.5Q19.5 10.5 19.5 12.5V16.5" fill="none" stroke="#cfd0f6" stroke-width="1.6"/><rect x="7.5" y="16.5" width="14.5" height="10" rx="1" fill="none" stroke="#cfd0f6" stroke-width="1.6"/><path d="M23 21.5L28 17.5V25.5Z" fill="#cfd0f6"/><circle cx="27.5" cy="7" r="3" fill="#e6e2a0"/></svg>
<svg style="position:absolute;left:827px;top:557px;overflow:visible" width="34" height="36" viewBox="0 0 34 36"><path d="M8 9H25.5L24 19H9.5Z" fill="none" stroke="#cfd0f6" stroke-width="1.6"/><path d="M17 14V28 M13.5 24.5L17 28L20.5 24.5" fill="none" stroke="#cfd0f6" stroke-width="1.6"/><circle cx="27.5" cy="8.5" r="3" fill="#e6e2a0"/></svg>
<div style="left:827px;top:614px;width:34px;height:33.5px;background:#3a3a3a;border-radius:2px"></div>
<svg style="position:absolute;left:827px;top:614px" width="34" height="33.5"><path d="M34 28.5L34 33.5L29 33.5Z" fill="#8a8a8a"/></svg>
<svg style="position:absolute;left:827px;top:614px;overflow:visible" width="34" height="34" viewBox="0 0 34 34"><path d="M17 7L25.5 12V22L17 27L8.5 22V12Z" fill="none" stroke="#505050" stroke-width="1.6"/><path d="M14 21L23 12" stroke="#5a5a5a" stroke-width="2.8" stroke-linecap="round"/><path d="M12.5 22.5L13.3 19.6L15.4 21.7Z" fill="#5a5a5a"/></svg>
<div style="left:37px;top:112px;width:786px;height:470px;background:#1e1e1e;"></div>
<div style="left:38px;top:113px;width:784px;height:22px;background:#272727;"></div>
<div class="t" style="left:68.00px;top:119.27px;color:#c3c3c3;font-size:11.5px;transform:scaleX(0.927);">View</div>
<div class="t" style="left:106.00px;top:119.27px;color:#c3c3c3;font-size:11.5px;transform:scaleX(0.889);">Cameras</div>
<div class="t" style="left:162.50px;top:119.27px;color:#c3c3c3;font-size:11.5px;transform:scaleX(0.913);">Display</div>
<div class="t" style="left:212.50px;top:119.27px;color:#c3c3c3;font-size:11.5px;transform:scaleX(0.960);">Options</div>
<div class="t" style="left:265.00px;top:119.27px;color:#c3c3c3;font-size:11.5px;transform:scaleX(0.938);">Filter</div>
<div class="t" style="left:304.50px;top:119.27px;color:#c3c3c3;font-size:11.5px;transform:scaleX(0.850);">Panel</div>
<div class="t" style="left:345.50px;top:119.27px;color:#c3c3c3;font-size:11.5px;transform:scaleX(0.912);">Redshift</div>
<svg style="position:absolute;left:38px;top:135px" width="784" height="444" viewBox="0 0 784 444"><defs>
<linearGradient id="sky" x1="0" y1="0" x2="0" y2="1">
<stop offset="0" stop-color="#6c90b4"/><stop offset="0.3" stop-color="#7a9ab9"/><stop offset="0.6" stop-color="#8fa9be"/><stop offset="0.85" stop-color="#a2b4c0"/><stop offset="1" stop-color="#abb9bd"/></linearGradient>
<linearGradient id="floor" x1="0" y1="0" x2="0" y2="1">
<stop offset="0" stop-color="#dfdeda"/><stop offset="1" stop-color="#dbdbd8"/></linearGradient>
<radialGradient id="sph" cx="0.38" cy="0.3" r="0.78">
<stop offset="0" stop-color="#b8d6b8"/><stop offset="0.45" stop-color="#aacdac"/><stop offset="0.8" stop-color="#97c29c"/><stop offset="1" stop-color="#7fb087"/></radialGradient>
<linearGradient id="cap" x1="0" y1="0" x2="1" y2="0">
<stop offset="0" stop-color="#5d9ce6"/><stop offset="0.55" stop-color="#62a0ea"/><stop offset="0.85" stop-color="#4f8ee6"/><stop offset="1" stop-color="#2c72dd"/></linearGradient>
<linearGradient id="capg" x1="0" y1="0" x2="1" y2="0">
<stop offset="0" stop-color="#5ec85e"/><stop offset="0.5" stop-color="#84dc84"/><stop offset="1" stop-color="#8ce08a"/></linearGradient>
<filter id="bl" x="-20%" y="-50%" width="140%" height="200%"><feGaussianBlur stdDeviation="1.2"/></filter>
<filter id="bl2"><feGaussianBlur stdDeviation="0.6"/></filter>
</defs>
<rect x="0" y="0" width="784" height="171" fill="url(#sky)"/>
<linearGradient id="hz" x1="0" y1="0" x2="0" y2="1"><stop offset="0" stop-color="#abb9bd"/><stop offset="0.55" stop-color="#9aa8a8"/><stop offset="0.8" stop-color="#6a7270"/><stop offset="1" stop-color="#2e2c28"/></linearGradient>
<rect x="0" y="170.5" width="784" height="8.5" fill="url(#hz)"/>
<rect x="0" y="179" width="784" height="60" fill="#2e2c28"/>
<path d="M0.0 224.0L156.0 212.0L784.0 225.0V444H0Z" fill="url(#floor)"/>
<path d="M224.0 257.0Q262.0 243.0 322.0 245.0Q380.0 249.0 378.0 257.0Q372.0 267.0 292.0 269.0Q230.0 267.0 224.0 257.0Z" fill="#5d6472" filter="url(#bl)"/>
<path d="M484.0 257.0Q507.0 253.0 518.0 261.0Q514.0 271.0 490.0 273.0Z" fill="#5d6472" filter="url(#bl)"/>
<ellipse cx="271.5" cy="191" rx="80" ry="77" fill="url(#sph)"/>
<circle cx="256" cy="162" r="1.6" fill="#eef5ee" filter="url(#bl2)"/>
<path d="M411.0 150.0C411.0 126.8 430.3 108.0 454.2 108.0C478.2 108.0 497.5 126.8 497.5 150.0L497.5 232.0C497.5 255.7 478.2 274.5 454.2 274.5C430.3 274.5 411.0 255.7 411.0 232.0Z" fill="url(#cap)"/>
<path d="M441.0 111.5C422.0 117.0 411.0 131.0 411.0 150.0L411.0 232.0C411.0 253.0 419.0 267.0 432.0 273.5Q423.0 245.0 423.5 195.0Q424.0 135.0 441.0 111.5Z" fill="url(#capg)"/>
<path d="M425.0 217.0Q442.0 213.0 452.0 217.0Q467.0 213.0 482.0 217.0Q492.0 213.0 497.0 217.0V230.0Q497.5 274.5 454.0 274.5Q432.0 274.5 428.0 265.0Q423.0 245.0 425.0 217.0Z" fill="#7ab0f0" opacity="0.35"/>
</svg>
<div style="left:37px;top:582px;width:789px;height:85px;background:#2b2b2b;"></div>
<div style="left:0px;top:667px;width:1280px;height:23px;background:#1c1c1c;"></div>
<div style="left:0px;top:689px;width:1280px;height:1px;background:#111;"></div>
<svg style="position:absolute;left:0px;top:30px;overflow:visible" width="58" height="24" viewBox="0 0 58 24"><path d="M11.5 12.8Q17.5 6.5 24.5 15.5" fill="none" stroke="#c8c8c8" stroke-width="2.2"/><path d="M9 9.5L9.3 16.5L15.5 15.8Z" fill="#c8c8c8"/><path d="M46.5 12.8Q40.5 6.5 33.5 15.5" fill="none" stroke="#555" stroke-width="2.2"/><path d="M49 9.5L48.7 16.5L42.5 15.8Z" fill="#555"/></svg>
<svg style="position:absolute;left:205px;top:30px;overflow:visible" width="50" height="24" viewBox="0 0 50 24"><path d="M7.8 10L13.8 16 M13.8 10L7.8 16" stroke="#d8d8d8" stroke-width="1.7"/><path d="M38 8.5V17.5 M33.5 13H42.5" stroke="#d8d8d8" stroke-width="2.4"/></svg>
<svg style="position:absolute;left:1125px;top:30px;overflow:visible" width="30" height="24" viewBox="0 0 30 24"><path d="M10.5 8.5V17.5 M6 13H15" stroke="#d8d8d8" stroke-width="2.4"/></svg>
<div style="left:1158.5px;top:34px;width:1.5px;height:14.5px;background:#d0d0d0;"></div>
<div style="left:1255px;top:38.5px;width:18px;height:9.5px;background:#e8e8e8;border-radius:5px"></div>
<div style="left:1264.5px;top:40.2px;width:6px;height:6px;background:#1b1b1b;border-radius:3px"></div>
<svg style="position:absolute;left:38px;top:113px;overflow:visible" width="30" height="22" viewBox="0 0 30 22"><path d="M6 6.2H20 M6 10.8H20 M6 15.4H20" stroke="#ececec" stroke-width="2"/></svg>
<svg style="position:absolute;left:740px;top:112px;overflow:visible" width="90" height="24" viewBox="0 0 90 24"><path d="M8.5 19.5Q5.5 15 5 13.5Q5 12 6.5 12.5L8.5 15V7Q9.5 5.5 10.5 7V12V5.5Q11.5 4 12.5 5.5V12V6Q13.5 4.5 14.5 6V12.5V8Q15.5 6.5 16.5 8V15Q16.5 19.5 13.5 20.5H11Q9.5 20.5 8.5 19.5Z" fill="#a6a6a6"/><path d="M32 5L27.5 9.5H30.8V13.5H33.2V9.5H36.5Z M26 13.5H38L32 20Z" fill="#a6a6a6"/><path d="M56.5 7.3A7 7 0 1 0 59 10" fill="none" stroke="#a6a6a6" stroke-width="1.6"/><circle cx="52" cy="12.5" r="2" fill="#a6a6a6"/><circle cx="55.5" cy="7" r="1.8" fill="#a6a6a6"/><rect x="65.8" y="5.8" width="13" height="13" rx="1" fill="none" stroke="#a6a6a6" stroke-width="1.5"/><path d="M65.8 10.5H74V18.8" fill="none" stroke="#a6a6a6" stroke-width="1.5"/></svg>
<div style="left:38px;top:135px;width:784px;height:3px;background:rgba(40,55,70,0.35);"></div>
<div style="left:41px;top:138.7px;width:61px;height:13.7px;background:rgba(50,75,100,0.38);border-radius:2px"></div>
<div class="t" style="left:43.50px;top:141.61px;color:#eef2f6;font-size:10.5px;transform:scaleX(0.945);letter-spacing:0.4px">Perspective</div>
<div style="left:380.3px;top:138.7px;width:98.7px;height:13.8px;background:rgba(50,75,100,0.38);border-radius:2px"></div>
<div class="t" style="left:383.00px;top:141.61px;color:#eef2f6;font-size:10.5px;transform:scaleX(0.982);letter-spacing:0.4px">Default Camera</div>
<svg style="position:absolute;left:462px;top:139px;overflow:visible" width="18" height="13" viewBox="0 0 18 13"><path d="M3.5 5.5V3.5Q3.5 2.5 4.5 2.5H8Q9 2.5 9 3.5V5.5" fill="none" stroke="#a0a8c8" stroke-width="0.9"/><rect x="2.5" y="5.5" width="8" height="5" fill="none" stroke="#a0a8c8" stroke-width="0.9"/><path d="M11.5 8L14 6.3V9.7Z" fill="#dde"/></svg>
<div style="left:41px;top:276px;width:54px;height:14.5px;background:rgba(70,85,95,0.35);border-radius:2px"></div>
<div class="t" style="left:43.50px;top:279.61px;color:#f4f4f4;font-size:10.5px;transform:scaleX(1.004);letter-spacing:0.4px">Move</div>
<svg style="position:absolute;left:79px;top:277px;overflow:visible" width="14" height="13" viewBox="0 0 14 13"><path d="M6.5 2V11 M2 6.5H11" stroke="#bcc4c8" stroke-width="0.9"/></svg>
<div style="left:41px;top:562px;width:106px;height:14.5px;background:rgba(120,120,120,0.35);border-radius:2px"></div>
<div class="t" style="left:43.80px;top:565.61px;color:#f4f4f4;font-size:10.5px;transform:scaleX(0.984);letter-spacing:0.4px">Use Project Settings</div>
<div style="left:692px;top:562px;width:128px;height:14.5px;background:rgba(120,120,120,0.35);border-radius:2px"></div>
<div class="t" style="left:694.00px;top:565.61px;color:#f4f4f4;font-size:10.5px;transform:scaleX(1.167);letter-spacing:0.4px">Grid Spacing : 50 cm</div>
<svg style="position:absolute;left:776px;top:138px;overflow:visible" width="50" height="45" viewBox="0 0 50 45"><path d="M11.5 13V31" stroke="#3ad06a" stroke-width="1.1"/><path d="M11 31H24" stroke="#e04848" stroke-width="1.2"/><path d="M11.5 30.5L20 29.5" stroke="#3a70e0" stroke-width="1.1"/><path d="M8.8 4.5L11.5 8L14.2 4.5 M11.5 8V11.5" stroke="#3ad06a" stroke-width="1" fill="none"/><path d="M21.5 24.5H27L21.5 31.5H27.5" stroke="#3a70e0" stroke-width="1.2" fill="none"/><path d="M32.5 28.5L38.5 37 M38.5 28.5L32.5 37" stroke="#e04848" stroke-width="1.2"/></svg>
<div style="left:46px;top:592px;width:26px;height:26px;background:#3c3c3c;border-radius:2px"></div>
<svg style="position:absolute;left:46px;top:592px;overflow:visible" width="26" height="26" viewBox="0 0 26 26"><path d="M13 6.5L19.5 13L13 19.5L6.5 13Z" fill="none" stroke="#d0d0d0" stroke-width="1.7"/></svg>
<div style="left:93px;top:592px;width:25.200000000000003px;height:26px;background:#3c3c3c;border-radius:0px"></div>
<div style="left:119px;top:592px;width:27.19999999999999px;height:26px;background:#3c3c3c;border-radius:0px"></div>
<div style="left:147px;top:592px;width:27.19999999999999px;height:26px;background:#3c3c3c;border-radius:0px"></div>
<div style="left:175px;top:592px;width:27.19999999999999px;height:26px;background:#3c3c3c;border-radius:0px"></div>
<div style="left:203px;top:592px;width:27.599999999999994px;height:26px;background:#3c3c3c;border-radius:0px"></div>
<div style="left:231.4px;top:592px;width:27.299999999999983px;height:26px;background:#3c3c3c;border-radius:0px"></div>
<div style="left:259.5px;top:592px;width:27.100000000000023px;height:26px;background:#3c3c3c;border-radius:0px"></div>
<svg style="position:absolute;left:0;top:0" width="300" height="620"><rect x="99" y="599" width="2.2" height="12" fill="#c0c0c0"/><path d="M112 599L103.5 605L112 611Z" fill="#c0c0c0"/><path d="M129 601.4L132.6 605L129 608.6L125.4 605Z" fill="none" stroke="#c0c0c0" stroke-width="1.3"/><path d="M143 599L135 605L143 611Z" fill="#c0c0c0"/><path d="M164.5 599L155.5 605L164.5 611Z" fill="#c0c0c0"/><rect x="166.5" y="599" width="2.2" height="12" fill="#c0c0c0"/><path d="M184 597L196 605L184 613Z" fill="#c0c0c0"/><rect x="211.5" y="599" width="2.2" height="12" fill="#c0c0c0"/><path d="M215.5 599L224 605L215.5 611Z" fill="#c0c0c0"/><path d="M237 599L245 605L237 611Z" fill="#c0c0c0"/><path d="M250.5 601.4L254.1 605L250.5 608.6L246.9 605Z" fill="none" stroke="#c0c0c0" stroke-width="1.3"/><path d="M268 599L276.5 605L268 611Z" fill="#c0c0c0"/><rect x="277.5" y="599" width="2.2" height="12" fill="#c0c0c0"/></svg>
<div style="left:299.2px;top:592px;width:25.600000000000023px;height:26px;background:#5b5ea8;border-radius:0px"></div>
<svg style="position:absolute;left:299.2px;top:592px" width="25.600000000000023" height="26"><path d="M25.600000000000023 21L25.600000000000023 26L20.600000000000023 26Z" fill="#a0a0c0"/></svg>
<div style="left:325.5px;top:592px;width:27.5px;height:26px;background:#5b5ea8;border-radius:0px"></div>
<svg style="position:absolute;left:325.5px;top:592px" width="27.5" height="26"><path d="M27.5 21L27.5 26L22.5 26Z" fill="#a0a0c0"/></svg>
<div style="left:353.5px;top:592px;width:27.30000000000001px;height:26px;background:#3c3c3c;border-radius:0px"></div>
<svg style="position:absolute;left:299px;top:592px;overflow:visible" width="26" height="26" viewBox="0 0 26 26"><path d="M7 12V7.5H19" fill="none" stroke="#dcdcf4" stroke-width="1.8"/><path d="M22 7.5L18 4.5V10.5Z" fill="#dcdcf4"/><path d="M19 14V18.5H7" fill="none" stroke="#dcdcf4" stroke-width="1.8"/><path d="M4 18.5L8 15.5V21.5Z" fill="#dcdcf4"/></svg>
<svg style="position:absolute;left:325px;top:592px;overflow:visible" width="28" height="26" viewBox="0 0 28 26"><text x="14.5" y="13" font-size="10" text-anchor="middle" font-family="Liberation Sans" fill="#dcdcf4">A</text><rect x="6" y="16.5" width="2" height="3.5" fill="#dcdcf4"/><rect x="10.5" y="16.5" width="2" height="3.5" fill="#dcdcf4"/><rect x="15" y="16.5" width="2" height="3.5" fill="#dcdcf4"/><rect x="19" y="16.5" width="5.5" height="3.5" fill="#dcdcf4"/></svg>
<svg style="position:absolute;left:353px;top:592px;overflow:visible" width="28" height="26" viewBox="0 0 28 26"><path d="M7 10.5H10.5L16 6V20L10.5 15.5H7Z" fill="#c0c0c0"/><path d="M18.5 8.5Q21.5 13 18.5 17.5" fill="none" stroke="#c0c0c0" stroke-width="2"/></svg>
<div style="left:393.5px;top:596.4px;width:73px;height:17.2px;background:#1a1a1a;border-radius:3px"></div>
<div class="t" style="left:421.60px;top:599.69px;color:#d8d8d8;font-size:11px;transform:scaleX(0.736);letter-spacing:1.5px">0 F</div>
<div style="left:479.2px;top:592px;width:26.0px;height:26px;background:#3c3c3c;border-radius:0px"></div>
<svg style="position:absolute;left:479.2px;top:592px" width="26.0" height="26"><path d="M26.0 21L26.0 26L21.0 26Z" fill="#8c8c8c"/></svg>
<div style="left:505.8px;top:592px;width:27.19999999999999px;height:26px;background:#3c3c3c;border-radius:0px"></div>
<div style="left:533.6px;top:592px;width:27.199999999999932px;height:26px;background:#3c3c3c;border-radius:0px"></div>
<svg style="position:absolute;left:479px;top:592px;overflow:visible" width="82" height="26" viewBox="0 0 82 26"><circle cx="13" cy="13" r="7.5" fill="none" stroke="#5a3a3a" stroke-width="2.2"/><path d="M13 8.5L17.5 13L13 17.5L8.5 13Z" fill="none" stroke="#5a3a3a" stroke-width="1.6"/><circle cx="41" cy="13" r="9.2" fill="#e85858"/><text x="41" y="17.6" font-size="13" text-anchor="middle" font-family="Liberation Sans" fill="#2a2a2a">A</text><circle cx="69" cy="13" r="9.2" fill="#c8c8c8"/><path d="M69.00 9.30L69.56 9.34L70.07 8.12L71.70 8.79L71.19 10.02L71.62 10.38L71.98 10.81L73.21 10.30L73.88 11.93L72.66 12.44L72.70 13.00L72.66 13.56L73.88 14.07L73.21 15.70L71.98 15.19L71.62 15.62L71.19 15.98L71.70 17.21L70.07 17.88L69.56 16.66L69.00 16.70L68.44 16.66L67.93 17.88L66.30 17.21L66.81 15.98L66.38 15.62L66.02 15.19L64.79 15.70L64.12 14.07L65.34 13.56L65.30 13.00L65.34 12.44L64.12 11.93L64.79 10.30L66.02 10.81L66.38 10.38L66.81 10.02L66.30 8.79L67.93 8.12L68.44 9.34Z" fill="#333"/><circle cx="69" cy="13" r="1.6" fill="#c8c8c8"/></svg>
<div style="left:573.2px;top:592px;width:25.59999999999991px;height:26px;background:#3c3c3c;border-radius:0px"></div>
<div style="left:599.4px;top:592px;width:27.5px;height:26px;background:#3c3c3c;border-radius:0px"></div>
<svg style="position:absolute;left:573px;top:592px;overflow:visible" width="54" height="26" viewBox="0 0 54 26"><circle cx="13" cy="13" r="9.2" fill="#c8c8c8"/><rect x="9.5" y="7.5" width="7" height="11" rx="3.5" fill="#333"/><path d="M13 8V11" stroke="#c8c8c8" stroke-width="0.9"/><path d="M36 18.5A7.5 7.5 0 1 1 46 18.5" fill="none" stroke="#8a8a8a" stroke-width="1.5"/><path d="M41 10L45 14L41 18L37 14Z" fill="none" stroke="#8a8a8a" stroke-width="1.4"/><path d="M43 12L47 7" stroke="#8a8a8a" stroke-width="1.4"/></svg>
<div style="left:639.3px;top:592px;width:25.100000000000136px;height:26px;background:#3c3c3c;border-radius:0px"></div>
<div style="left:665.2px;top:592px;width:27.399999999999977px;height:26px;background:#3c3c3c;border-radius:0px"></div>
<div style="left:693.4px;top:592px;width:27.40000000000009px;height:26px;background:#3c3c3c;border-radius:0px"></div>
<div style="left:721.6px;top:592px;width:27.200000000000045px;height:26px;background:#3c3c3c;border-radius:0px"></div>
<div style="left:749.6px;top:592px;width:27.399999999999977px;height:26px;background:#5b5ea8;border-radius:0px"></div>
<div style="left:798px;top:592px;width:25.299999999999955px;height:26px;background:#3c3c3c;border-radius:2px"></div>
<svg style="position:absolute;left:639px;top:592px;overflow:visible" width="190" height="26" viewBox="0 0 190 26"><path d="M13 9L17 13L13 17L9 13Z" fill="none" stroke="#c0c0c0" stroke-width="1.5"/><path d="M13 4L10.8 6.5H15.2Z M13 22L10.8 19.5H15.2Z M4 13L6.5 10.8V15.2Z M22 13L19.5 10.8V15.2Z" fill="#c0c0c0"/>
<path d="M40.5 10L43.5 13L40.5 16L37.5 13Z" fill="none" stroke="#c0c0c0" stroke-width="1.5"/><path d="M35.5 18Q31 12 36 6.5 M45.5 8Q50 14 45 19.5" fill="none" stroke="#c0c0c0" stroke-width="1.5"/><path d="M34 16L36.8 20.5L38 16Z M47 10L44.2 5.5L43 10Z" fill="#c0c0c0"/>
<path d="M63 10V5.5H77V19.5H72.5" fill="none" stroke="#c0c0c0" stroke-width="1.5"/><path d="M67.5 13L71 16.5L67.5 20L64 16.5Z" fill="none" stroke="#c0c0c0" stroke-width="1.5"/><path d="M69 10.5H71V12.5" fill="none" stroke="#c0c0c0" stroke-width="1.2"/>
<rect x="89" y="7" width="16" height="5" rx="2.5" fill="#cfcfcf"/><circle cx="91.6" cy="9.5" r="1.5" fill="#333"/><rect x="89" y="14.5" width="16" height="5" rx="2.5" fill="#cfcfcf"/><circle cx="102.4" cy="17" r="1.5" fill="#333"/>
<path d="M117 6.5L129 19.5" stroke="#d8d8e8" stroke-width="1.4"/><circle cx="126" cy="10" r="2.3" fill="#d8d8c8"/><circle cx="118.5" cy="17.5" r="2.3" fill="#d8d8c8"/><path d="M125.5 17.5L128 20.5L124 19Z" fill="#d8d8c8"/>
<path d="M165 6V20H179" fill="none" stroke="#c0c0c0" stroke-width="1.5"/><path d="M165 20L177 8" stroke="#c0c0c0" stroke-width="1.5"/><path d="M165 3.5L162.8 6.5H167.2Z M181.5 20L178.5 17.8V22.2Z M178.5 6.5L174.5 7.3L177.7 10.5Z" fill="#c0c0c0"/></svg>
<svg style="position:absolute;left:0;top:0" width="830" height="660"><rect x="51.9" y="639.2" width="1.1" height="4" fill="#9a9a9a"/><rect x="60.4" y="640" width="1.1" height="2.2" fill="#9a9a9a"/><rect x="68.9" y="640" width="1.1" height="2.2" fill="#9a9a9a"/><rect x="77.4" y="640" width="1.1" height="2.2" fill="#9a9a9a"/><rect x="85.9" y="640" width="1.1" height="2.2" fill="#9a9a9a"/><rect x="94.4" y="639.2" width="1.1" height="4" fill="#9a9a9a"/><rect x="102.9" y="640" width="1.1" height="2.2" fill="#9a9a9a"/><rect x="111.4" y="640" width="1.1" height="2.2" fill="#9a9a9a"/><rect x="119.9" y="640" width="1.1" height="2.2" fill="#9a9a9a"/><rect x="128.4" y="640" width="1.1" height="2.2" fill="#9a9a9a"/><rect x="136.9" y="639.2" width="1.1" height="4" fill="#9a9a9a"/><rect x="145.4" y="640" width="1.1" height="2.2" fill="#9a9a9a"/><rect x="153.9" y="640" width="1.1" height="2.2" fill="#9a9a9a"/><rect x="162.4" y="640" width="1.1" height="2.2" fill="#9a9a9a"/><rect x="170.9" y="640" width="1.1" height="2.2" fill="#9a9a9a"/><rect x="179.4" y="639.2" width="1.1" height="4" fill="#9a9a9a"/><rect x="187.9" y="640" width="1.1" height="2.2" fill="#9a9a9a"/><rect x="196.4" y="640" width="1.1" height="2.2" fill="#9a9a9a"/><rect x="204.9" y="640" width="1.1" height="2.2" fill="#9a9a9a"/><rect x="213.4" y="640" width="1.1" height="2.2" fill="#9a9a9a"/><rect x="221.9" y="639.2" width="1.1" height="4" fill="#9a9a9a"/><rect x="230.4" y="640" width="1.1" height="2.2" fill="#9a9a9a"/><rect x="238.9" y="640" width="1.1" height="2.2" fill="#9a9a9a"/><rect x="247.4" y="640" width="1.1" height="2.2" fill="#9a9a9a"/><rect x="255.9" y="640" width="1.1" height="2.2" fill="#9a9a9a"/><rect x="264.4" y="639.2" width="1.1" height="4" fill="#9a9a9a"/><rect x="272.9" y="640" width="1.1" height="2.2" fill="#9a9a9a"/><rect x="281.4" y="640" width="1.1" height="2.2" fill="#9a9a9a"/><rect x="289.9" y="640" width="1.1" height="2.2" fill="#9a9a9a"/><rect x="298.4" y="640" width="1.1" height="2.2" fill="#9a9a9a"/><rect x="306.9" y="639.2" width="1.1" height="4" fill="#9a9a9a"/><rect x="315.4" y="640" width="1.1" height="2.2" fill="#9a9a9a"/><rect x="323.9" y="640" width="1.1" height="2.2" fill="#9a9a9a"/><rect x="332.4" y="640" width="1.1" height="2.2" fill="#9a9a9a"/><rect x="340.9" y="640" width="1.1" height="2.2" fill="#9a9a9a"/><rect x="349.4" y="639.2" width="1.1" height="4" fill="#9a9a9a"/><rect x="357.9" y="640" width="1.1" height="2.2" fill="#9a9a9a"/><rect x="366.4" y="640" width="1.1" height="2.2" fill="#9a9a9a"/><rect x="374.9" y="640" width="1.1" height="2.2" fill="#9a9a9a"/><rect x="383.4" y="640" width="1.1" height="2.2" fill="#9a9a9a"/><rect x="391.9" y="639.2" width="1.1" height="4" fill="#9a9a9a"/><rect x="400.4" y="640" width="1.1" height="2.2" fill="#9a9a9a"/><rect x="408.9" y="640" width="1.1" height="2.2" fill="#9a9a9a"/><rect x="417.4" y="640" width="1.1" height="2.2" fill="#9a9a9a"/><rect x="425.9" y="640" width="1.1" height="2.2" fill="#9a9a9a"/><rect x="434.4" y="639.2" width="1.1" height="4" fill="#9a9a9a"/><rect x="442.9" y="640" width="1.1" height="2.2" fill="#9a9a9a"/><rect x="451.4" y="640" width="1.1" height="2.2" fill="#9a9a9a"/><rect x="459.9" y="640" width="1.1" height="2.2" fill="#9a9a9a"/><rect x="468.4" y="640" width="1.1" height="2.2" fill="#9a9a9a"/><rect x="476.9" y="639.2" width="1.1" height="4" fill="#9a9a9a"/><rect x="485.4" y="640" width="1.1" height="2.2" fill="#9a9a9a"/><rect x="493.9" y="640" width="1.1" height="2.2" fill="#9a9a9a"/><rect x="502.4" y="640" width="1.1" height="2.2" fill="#9a9a9a"/><rect x="510.9" y="640" width="1.1" height="2.2" fill="#9a9a9a"/><rect x="519.4" y="639.2" width="1.1" height="4" fill="#9a9a9a"/><rect x="527.9" y="640" width="1.1" height="2.2" fill="#9a9a9a"/><rect x="536.4" y="640" width="1.1" height="2.2" fill="#9a9a9a"/><rect x="544.9" y="640" width="1.1" height="2.2" fill="#9a9a9a"/><rect x="553.4" y="640" width="1.1" height="2.2" fill="#9a9a9a"/><rect x="561.9" y="639.2" width="1.1" height="4" fill="#9a9a9a"/><rect x="570.4" y="640" width="1.1" height="2.2" fill="#9a9a9a"/><rect x="578.9" y="640" width="1.1" height="2.2" fill="#9a9a9a"/><rect x="587.4" y="640" width="1.1" height="2.2" fill="#9a9a9a"/><rect x="595.9" y="640" width="1.1" height="2.2" fill="#9a9a9a"/><rect x="604.4" y="639.2" width="1.1" height="4" fill="#9a9a9a"/><rect x="612.9" y="640" width="1.1" height="2.2" fill="#9a9a9a"/><rect x="621.4" y="640" width="1.1" height="2.2" fill="#9a9a9a"/><rect x="629.9" y="640" width="1.1" height="2.2" fill="#9a9a9a"/><rect x="638.4" y="640" width="1.1" height="2.2" fill="#9a9a9a"/><rect x="646.9" y="639.2" width="1.1" height="4" fill="#9a9a9a"/><rect x="655.4" y="640" width="1.1" height="2.2" fill="#9a9a9a"/><rect x="663.9" y="640" width="1.1" height="2.2" fill="#9a9a9a"/><rect x="672.4" y="640" width="1.1" height="2.2" fill="#9a9a9a"/><rect x="680.9" y="640" width="1.1" height="2.2" fill="#9a9a9a"/><rect x="689.4" y="639.2" width="1.1" height="4" fill="#9a9a9a"/><rect x="697.9" y="640" width="1.1" height="2.2" fill="#9a9a9a"/><rect x="706.4" y="640" width="1.1" height="2.2" fill="#9a9a9a"/><rect x="714.9" y="640" width="1.1" height="2.2" fill="#9a9a9a"/><rect x="723.4" y="640" width="1.1" height="2.2" fill="#9a9a9a"/><rect x="731.9" y="639.2" width="1.1" height="4" fill="#9a9a9a"/><rect x="740.4" y="640" width="1.1" height="2.2" fill="#9a9a9a"/><rect x="748.9" y="640" width="1.1" height="2.2" fill="#9a9a9a"/><rect x="757.4" y="640" width="1.1" height="2.2" fill="#9a9a9a"/><rect x="765.9" y="640" width="1.1" height="2.2" fill="#9a9a9a"/><rect x="774.4" y="639.2" width="1.1" height="4" fill="#9a9a9a"/><rect x="782.9" y="640" width="1.1" height="2.2" fill="#9a9a9a"/><rect x="791.4" y="640" width="1.1" height="2.2" fill="#9a9a9a"/><rect x="799.9" y="640" width="1.1" height="2.2" fill="#9a9a9a"/><rect x="808.4" y="640" width="1.1" height="2.2" fill="#9a9a9a"/><rect x="816.9" y="639.2" width="1.1" height="4" fill="#9a9a9a"/><rect x="46" y="637" width="776" height="0.8" fill="#303030"/><rect x="306.8" y="621" width="1" height="22" fill="#aaaaaa"/><rect x="561.8" y="621" width="1" height="22" fill="#aaaaaa"/><rect x="816.8" y="621" width="1" height="22" fill="#aaaaaa"/></svg>
<div style="left:48px;top:621px;width:9px;height:16px;background:#7778c8;"></div>
<div style="left:52px;top:636px;width:1.3px;height:7px;background:#d8d8d8;"></div>
<div class="t" style="left:58.00px;top:623.19px;color:#6f80d8;font-size:11px;transform:scaleX(0.984);">0</div>
<div class="t" style="left:91.85px;top:623.19px;color:#b8b8b8;font-size:11px;transform:scaleX(1.000);">5</div>
<div class="t" style="left:131.30px;top:623.19px;color:#b8b8b8;font-size:11px;transform:scaleX(1.000);">10</div>
<div class="t" style="left:173.80px;top:623.19px;color:#b8b8b8;font-size:11px;transform:scaleX(1.000);">15</div>
<div class="t" style="left:216.30px;top:623.19px;color:#b8b8b8;font-size:11px;transform:scaleX(1.000);">20</div>
<div class="t" style="left:258.80px;top:623.19px;color:#b8b8b8;font-size:11px;transform:scaleX(1.000);">25</div>
<div class="t" style="left:301.30px;top:623.19px;color:#b8b8b8;font-size:11px;transform:scaleX(1.000);">30</div>
<div class="t" style="left:343.80px;top:623.19px;color:#b8b8b8;font-size:11px;transform:scaleX(1.000);">35</div>
<div class="t" style="left:386.30px;top:623.19px;color:#b8b8b8;font-size:11px;transform:scaleX(1.000);">40</div>
<div class="t" style="left:428.80px;top:623.19px;color:#b8b8b8;font-size:11px;transform:scaleX(1.000);">45</div>
<div class="t" style="left:471.30px;top:623.19px;color:#b8b8b8;font-size:11px;transform:scaleX(1.000);">50</div>
<div class="t" style="left:513.80px;top:623.19px;color:#b8b8b8;font-size:11px;transform:scaleX(1.000);">55</div>
<div class="t" style="left:556.30px;top:623.19px;color:#b8b8b8;font-size:11px;transform:scaleX(1.000);">60</div>
<div class="t" style="left:598.80px;top:623.19px;color:#b8b8b8;font-size:11px;transform:scaleX(1.000);">65</div>
<div class="t" style="left:641.30px;top:623.19px;color:#b8b8b8;font-size:11px;transform:scaleX(1.000);">70</div>
<div class="t" style="left:683.80px;top:623.19px;color:#b8b8b8;font-size:11px;transform:scaleX(1.000);">75</div>
<div class="t" style="left:726.30px;top:623.19px;color:#b8b8b8;font-size:11px;transform:scaleX(1.000);">80</div>
<div class="t" style="left:768.80px;top:623.19px;color:#b8b8b8;font-size:11px;transform:scaleX(1.000);">85</div>
<div class="t" style="left:811.30px;top:623.19px;color:#b8b8b8;font-size:11px;transform:scaleX(1.000);">90</div>
<div style="left:46px;top:646.4px;width:73.7px;height:17.3px;background:#1a1a1a;border-radius:3px"></div>
<div class="t" style="left:75.50px;top:649.69px;color:#d8d8d8;font-size:11px;transform:scaleX(0.692);letter-spacing:1.5px">0 F</div>
<div style="left:128px;top:646.4px;width:616px;height:17.3px;background:#404040;border-radius:2px"></div>
<div style="left:133px;top:649.5px;width:1px;height:11px;background:#777;"></div>
<div style="left:136px;top:649.5px;width:1px;height:11px;background:#777;"></div>
<div class="t" style="left:143.00px;top:649.69px;color:#d8d8d8;font-size:11px;transform:scaleX(0.692);letter-spacing:1.5px">0 F</div>
<div class="t" style="left:705.00px;top:649.69px;color:#d8d8d8;font-size:11px;transform:scaleX(0.773);letter-spacing:1px">90 F</div>
<div style="left:734px;top:649.5px;width:1px;height:11px;background:#777;"></div>
<div style="left:737px;top:649.5px;width:1px;height:11px;background:#777;"></div>
<div style="left:750px;top:646.4px;width:74px;height:17.3px;background:#1a1a1a;border-radius:3px"></div>
<div class="t" style="left:775.80px;top:649.69px;color:#d8d8d8;font-size:11px;transform:scaleX(0.782);letter-spacing:1px">90 F</div>
<svg style="position:absolute;left:0px;top:667px;overflow:visible" width="60" height="23" viewBox="0 0 60 23"><path d="M5 8.3H19 M5 12.3H19 M5 16.3H19" stroke="#8a8a8a" stroke-width="1.6"/><circle cx="32" cy="12.3" r="4.6" fill="none" stroke="#5c9ae0" stroke-width="1.9"/></svg>
<div style="left:47px;top:676px;width:76px;height:6px;background:#555;border-radius:3px"></div>
<div style="left:47px;top:676px;width:71px;height:6px;background:#6f70c4;border-radius:3px"></div>
<div class="t" style="left:129.00px;top:674.77px;color:#c8c8c8;font-size:11.5px;transform:scaleX(0.937);">Progressive rendering 96%</div>
<div style="left:863px;top:82px;width:417px;height:172px;background:#2b2b2b;"></div>
<div style="left:923px;top:83px;width:357px;height:22px;background:#1c1c1c;"></div>
<div class="t" style="left:875.00px;top:90.27px;color:#d0d0d0;font-size:11.5px;transform:scaleX(0.936);">Objects</div>
<div class="t" style="left:936.00px;top:90.27px;color:#6a6a6a;font-size:11.5px;transform:scaleX(0.867);">Takes</div>
<div class="t" style="left:894.00px;top:112.27px;color:#c3c3c3;font-size:11.5px;transform:scaleX(0.892);">File</div>
<div class="t" style="left:925.00px;top:112.27px;color:#c3c3c3;font-size:11.5px;transform:scaleX(0.909);">Edit</div>
<div class="t" style="left:958.00px;top:112.27px;color:#c3c3c3;font-size:11.5px;transform:scaleX(0.927);">View</div>
<div class="t" style="left:996.00px;top:112.27px;color:#c3c3c3;font-size:11.5px;transform:scaleX(0.964);">Object</div>
<div class="t" style="left:1042.00px;top:112.27px;color:#c3c3c3;font-size:11.5px;transform:scaleX(0.864);">Tags</div>
<div class="t" style="left:1078.00px;top:112.27px;color:#c3c3c3;font-size:11.5px;transform:scaleX(0.930);">Bookmarks</div>
<div style="left:863px;top:256px;width:417px;height:411px;background:#2b2b2b;"></div>
<div style="left:934px;top:258px;width:346px;height:21px;background:#1c1c1c;"></div>
<div class="t" style="left:874.75px;top:263.27px;color:#d0d0d0;font-size:11.5px;transform:scaleX(0.993);">Attributes</div>
<div class="t" style="left:947.00px;top:263.27px;color:#6a6a6a;font-size:11.5px;transform:scaleX(0.870);">Layers</div>
<div class="t" style="left:894.40px;top:284.77px;color:#c3c3c3;font-size:11.5px;transform:scaleX(0.958);">Mode</div>
<div class="t" style="left:937.00px;top:284.77px;color:#c3c3c3;font-size:11.5px;transform:scaleX(0.909);">Edit</div>
<div class="t" style="left:970.50px;top:284.77px;color:#c3c3c3;font-size:11.5px;transform:scaleX(0.905);">User Data</div>
<svg style="position:absolute;left:863px;top:105px;overflow:visible" width="40" height="24" viewBox="0 0 40 24"><path d="M7 8H21 M7 12H21 M7 16H21" stroke="#9a9a9a" stroke-width="1.8"/></svg>
<svg style="position:absolute;left:1195px;top:106px;overflow:visible" width="85" height="24" viewBox="0 0 85 24"><circle cx="14.6" cy="9.3" r="4.6" fill="none" stroke="#9a9a9a" stroke-width="1.5"/><path d="M17.8 12.6L22 17" stroke="#9a9a9a" stroke-width="1.6"/><path d="M31 17.8V8.5L36.5 3.8L42 8.5V17.8Z" fill="none" stroke="#9a9a9a" stroke-width="1.4"/><rect x="35" y="13" width="3" height="4.8" fill="#9a9a9a"/><path d="M49 6.8H63 M51 10.5H61 M54 14.3H58" stroke="#9a9a9a" stroke-width="1.7"/><path d="M74 4.3H69.8V17.8H83.3V13.5 M76.5 4.3H83.3V11 M83 4.5L74.5 13" fill="none" stroke="#9a9a9a" stroke-width="1.5"/></svg>
<div style="left:864px;top:129px;width:416px;height:125px;background:#2c2c2c;"></div>
<div style="left:864px;top:129.5px;width:416px;height:20px;background:#262626;"></div>
<div style="left:864px;top:169.5px;width:416px;height:20px;background:#262626;"></div>
<div style="left:864px;top:209.5px;width:416px;height:20px;background:#262626;"></div>
<div style="left:1026.5px;top:130px;width:1px;height:124px;background:#1d1d1d;"></div>
<div class="t" style="left:900.00px;top:136.27px;color:#c8c8c8;font-size:11.5px;transform:scaleX(0.913);">Redshift Sky</div>
<div class="t" style="left:912.00px;top:156.27px;color:#c8c8c8;font-size:11.5px;transform:scaleX(0.912);">Redshift Sun</div>
<div class="t" style="left:900.00px;top:176.27px;color:#c8c8c8;font-size:11.5px;transform:scaleX(0.896);">Capsule</div>
<div class="t" style="left:900.00px;top:196.27px;color:#c8c8c8;font-size:11.5px;transform:scaleX(0.884);">Plane</div>
<div class="t" style="left:900.00px;top:216.27px;color:#c8c8c8;font-size:11.5px;transform:scaleX(0.916);">Sphere</div>
<svg style="position:absolute;left:863px;top:128px" width="40" height="100"><path d="M9.5 0V92 M14.5 12.5H18 M21.5 22.5V33H32 M9.5 53H18 M9.5 73H18 M9.5 92.5H18" stroke="#5c5c5c" stroke-width="1" fill="none"/><rect x="5.5" y="8.5" width="9" height="9" fill="#2b2b2b" stroke="#777" stroke-width="1"/><path d="M7.5 13H12.5" stroke="#999" stroke-width="1"/></svg>
<svg style="position:absolute;left:880px;top:132px;overflow:visible" width="18" height="18" viewBox="0 0 18 18"><circle cx="8.5" cy="9" r="4.9" fill="none" stroke="#d4d4f6" stroke-width="1.4"/><path d="M7.24 3.95L8.50 1.80L9.76 3.95Z" fill="#d4d4f6"/><path d="M11.18 4.54L13.59 3.91L12.96 6.32Z" fill="#d4d4f6"/><path d="M13.55 7.74L15.70 9.00L13.55 10.26Z" fill="#d4d4f6"/><path d="M12.96 11.68L13.59 14.09L11.18 13.46Z" fill="#d4d4f6"/><path d="M9.76 14.05L8.50 16.20L7.24 14.05Z" fill="#d4d4f6"/><path d="M5.82 13.46L3.41 14.09L4.04 11.68Z" fill="#d4d4f6"/><path d="M3.45 10.26L1.30 9.00L3.45 7.74Z" fill="#d4d4f6"/><path d="M4.04 6.32L3.41 3.91L5.82 4.54Z" fill="#d4d4f6"/><circle cx="8.5" cy="9" r="4.6" fill="#d4d4f6"/><circle cx="6.6" cy="8.2" r="3.7" fill="#262626"/></svg>
<svg style="position:absolute;left:892px;top:152px;overflow:visible" width="18" height="18" viewBox="0 0 18 18"><path d="M6 9.5Q6 6.5 8.8 6.5Q11.6 6.5 11.6 9.5Q11.6 11 10.5 12.3V14.5H7.1V12.3Q6 11 6 9.5Z" fill="none" stroke="#d4d4f6" stroke-width="1.2"/><path d="M7.5 15.5H10" stroke="#d4d4f6" stroke-width="1"/><path d="M8.8 2.5V4 M3.8 4.8L4.8 5.8 M13.8 4.8L12.8 5.8 M1.8 9.5H3.4 M14.2 9.5H15.8" stroke="#d4d4f6" stroke-width="1"/></svg>
<svg style="position:absolute;left:880px;top:171px;overflow:visible" width="18" height="20" viewBox="0 0 18 20"><rect x="3.8" y="3.3" width="9.4" height="13.5" rx="4.7" fill="#86d6f6"/><path d="M3.8 10Q8.5 8.5 13.2 10" stroke="#262626" stroke-width="1" fill="none"/></svg>
<svg style="position:absolute;left:880px;top:192px;overflow:visible" width="18" height="18" viewBox="0 0 18 18"><path d="M1.5 9L8.5 5L15.5 9L8.5 13Z" fill="#86d6f6"/><path d="M5 7L12 11 M12 7L5 11" stroke="#2a2a2a" stroke-width="0.9"/></svg>
<svg style="position:absolute;left:880px;top:212px;overflow:visible" width="18" height="18" viewBox="0 0 18 18"><circle cx="8.5" cy="9" r="6.5" fill="#86d6f6"/><path d="M2 9.6Q8.5 7.6 15 9.6" stroke="#2a2a2a" stroke-width="1" fill="none"/></svg>
<svg style="position:absolute;left:983px;top:134.8px;overflow:visible" width="10.5" height="10.5" viewBox="0 0 10.5 10.5"><rect x="0" y="0" width="10.2" height="10.2" rx="2" fill="#5e5e5e"/><path d="M3.2 7.2L7 3.2" stroke="#262626" stroke-width="1.3"/></svg>
<svg style="position:absolute;left:998px;top:132px;overflow:visible" width="8" height="16" viewBox="0 0 8 16"><circle cx="3.8" cy="3.8" r="2.9" fill="#595959"/><circle cx="3.8" cy="12.6" r="2.9" fill="#595959"/></svg>
<svg style="position:absolute;left:1008px;top:134px;overflow:visible" width="15" height="11" viewBox="0 0 15 11"><path d="M1.8 5L5.2 8.6L13 1.3" fill="none" stroke="#55dd72" stroke-width="2"/></svg>
<svg style="position:absolute;left:983px;top:154.8px;overflow:visible" width="10.5" height="10.5" viewBox="0 0 10.5 10.5"><rect x="0" y="0" width="10.2" height="10.2" rx="2" fill="#5e5e5e"/><path d="M3.2 7.2L7 3.2" stroke="#262626" stroke-width="1.3"/></svg>
<svg style="position:absolute;left:998px;top:152px;overflow:visible" width="8" height="16" viewBox="0 0 8 16"><circle cx="3.8" cy="3.8" r="2.9" fill="#595959"/><circle cx="3.8" cy="12.6" r="2.9" fill="#595959"/></svg>
<svg style="position:absolute;left:1008px;top:154px;overflow:visible" width="15" height="11" viewBox="0 0 15 11"><path d="M1.8 5L5.2 8.6L13 1.3" fill="none" stroke="#55dd72" stroke-width="2"/></svg>
<svg style="position:absolute;left:983px;top:174.8px;overflow:visible" width="10.5" height="10.5" viewBox="0 0 10.5 10.5"><rect x="0" y="0" width="10.2" height="10.2" rx="2" fill="#5e5e5e"/><path d="M5 2.3V8 M2.2 5.2H7.8" stroke="#262626" stroke-width="1.6"/></svg>
<svg style="position:absolute;left:998px;top:172px;overflow:visible" width="8" height="16" viewBox="0 0 8 16"><circle cx="3.8" cy="3.8" r="2.9" fill="#595959"/><circle cx="3.8" cy="12.6" r="2.9" fill="#595959"/></svg>
<svg style="position:absolute;left:1008px;top:174px;overflow:visible" width="15" height="11" viewBox="0 0 15 11"><path d="M1.8 5L5.2 8.6L13 1.3" fill="none" stroke="#55dd72" stroke-width="2"/></svg>
<svg style="position:absolute;left:983px;top:194.8px;overflow:visible" width="10.5" height="10.5" viewBox="0 0 10.5 10.5"><rect x="0" y="0" width="10.2" height="10.2" rx="2" fill="#5e5e5e"/><path d="M5 2.3V8 M2.2 5.2H7.8" stroke="#262626" stroke-width="1.6"/></svg>
<svg style="position:absolute;left:998px;top:192px;overflow:visible" width="8" height="16" viewBox="0 0 8 16"><circle cx="3.8" cy="3.8" r="2.9" fill="#595959"/><circle cx="3.8" cy="12.6" r="2.9" fill="#595959"/></svg>
<svg style="position:absolute;left:1008px;top:194px;overflow:visible" width="15" height="11" viewBox="0 0 15 11"><path d="M1.8 5L5.2 8.6L13 1.3" fill="none" stroke="#55dd72" stroke-width="2"/></svg>
<svg style="position:absolute;left:983px;top:214.8px;overflow:visible" width="10.5" height="10.5" viewBox="0 0 10.5 10.5"><rect x="0" y="0" width="10.2" height="10.2" rx="2" fill="#5e5e5e"/><path d="M5 2.3V8 M2.2 5.2H7.8" stroke="#262626" stroke-width="1.6"/></svg>
<svg style="position:absolute;left:998px;top:212px;overflow:visible" width="8" height="16" viewBox="0 0 8 16"><circle cx="3.8" cy="3.8" r="2.9" fill="#595959"/><circle cx="3.8" cy="12.6" r="2.9" fill="#595959"/></svg>
<svg style="position:absolute;left:1008px;top:214px;overflow:visible" width="15" height="11" viewBox="0 0 15 11"><path d="M1.8 5L5.2 8.6L13 1.3" fill="none" stroke="#55dd72" stroke-width="2"/></svg>
<svg style="position:absolute;left:1029px;top:172px;overflow:visible" width="16" height="15" viewBox="0 0 16 15"><path d="M1.8 14V1.8H14.3" fill="none" stroke="#8e8ef4" stroke-width="1.7"/><path d="M4 4H10.5Q10.5 10 4 10.8Z" fill="#c8c8c8"/></svg>
<svg style="position:absolute;left:1029px;top:192px;overflow:visible" width="16" height="15" viewBox="0 0 16 15"><path d="M1.8 14V1.8H14.3" fill="none" stroke="#8e8ef4" stroke-width="1.7"/><path d="M4 4H10.5Q10.5 10 4 10.8Z" fill="#c8c8c8"/></svg>
<svg style="position:absolute;left:1029px;top:212px;overflow:visible" width="16" height="15" viewBox="0 0 16 15"><path d="M1.8 14V1.8H14.3" fill="none" stroke="#8e8ef4" stroke-width="1.7"/><path d="M4 4H10.5Q10.5 10 4 10.8Z" fill="#c8c8c8"/></svg>
<svg style="position:absolute;left:1048px;top:170px;overflow:visible" width="18" height="18" viewBox="0 0 18 18"><rect x="0" y="0" width="18" height="17.5" fill="#6a6a6a"/><rect x="0" y="0" width="9" height="8.75" fill="#5e5e5e"/><rect x="9" y="8.75" width="9" height="8.75" fill="#5e5e5e"/><defs><linearGradient id="mb" x1="0" x2="1"><stop offset="0" stop-color="#e84830"/><stop offset="0.3" stop-color="#e85038"/><stop offset="0.33" stop-color="#58d048"/><stop offset="0.68" stop-color="#70d858"/><stop offset="0.72" stop-color="#3850d0"/><stop offset="1" stop-color="#2840b8"/></linearGradient></defs><ellipse cx="9" cy="8.8" rx="7.8" ry="8" fill="url(#mb)"/></svg>
<svg style="position:absolute;left:1048px;top:210px;overflow:visible" width="18" height="18" viewBox="0 0 18 18"><rect x="0" y="0" width="18" height="17.5" fill="#6a6a6a"/><defs><radialGradient id="ms" cx="0.4" cy="0.35" r="0.7"><stop offset="0" stop-color="#9ab89e"/><stop offset="1" stop-color="#5d7d64"/></radialGradient></defs><circle cx="9" cy="9" r="8" fill="url(#ms)"/></svg>
<svg style="position:absolute;left:863px;top:279px;overflow:visible" width="40" height="24" viewBox="0 0 40 24"><path d="M7 6.5H21 M7 10.8H21 M7 15.1H21" stroke="#9a9a9a" stroke-width="1.8"/></svg>
<svg style="position:absolute;left:1115px;top:280px;overflow:visible" width="165" height="24" viewBox="0 0 165 24"><path d="M9.5 9.7H23 M15 4L9.5 9.7L15 15.4" fill="none" stroke="#a0a0a0" stroke-width="1.8"/><path d="M29 9.7H42.5 M37 4L42.5 9.7L37 15.4" fill="none" stroke="#404040" stroke-width="1.8"/><path d="M55.5 17V3.5 M49.5 9.5L55.5 3.5L61.5 9.5" fill="none" stroke="#a0a0a0" stroke-width="1.8"/><circle cx="74.5" cy="9" r="4.6" fill="none" stroke="#a0a0a0" stroke-width="1.5"/><path d="M77.8 12.3L82 16.5" stroke="#a0a0a0" stroke-width="1.6"/><path d="M89 6H103 M91 10H101 M94 14H98" stroke="#a0a0a0" stroke-width="1.7"/><rect x="110" y="10.3" width="11.8" height="6.7" rx="0.8" fill="none" stroke="#a0a0a0" stroke-width="1.5"/><path d="M112.5 10.3V7.3Q112.5 3.7 116 3.7Q119.5 3.7 119.5 7.3" fill="none" stroke="#a0a0a0" stroke-width="1.5"/><circle cx="136" cy="10" r="7" fill="none" stroke="#a0a0a0" stroke-width="1.5"/><circle cx="136" cy="10" r="2.3" fill="none" stroke="#a0a0a0" stroke-width="1.5"/><path d="M154.5 3.8H149.8V17H163V12.5 M156.5 3.8H163V10 M162.8 4L154.5 12.3" fill="none" stroke="#a0a0a0" stroke-width="1.5"/></svg>
<div style="left:1175px;top:306px;width:98px;height:19px;background:#303030;border-radius:9px"></div>
<svg style="position:absolute;left:830px;top:85px" width="30" height="4"><rect x="0" y="0" width="1" height="1" fill="#4a4a4a"/><rect x="1.5" y="2" width="1" height="1" fill="#4a4a4a"/><rect x="3" y="0" width="1" height="1" fill="#4a4a4a"/><rect x="4.5" y="2" width="1" height="1" fill="#4a4a4a"/><rect x="6" y="0" width="1" height="1" fill="#4a4a4a"/><rect x="7.5" y="2" width="1" height="1" fill="#4a4a4a"/><rect x="9" y="0" width="1" height="1" fill="#4a4a4a"/><rect x="10.5" y="2" width="1" height="1" fill="#4a4a4a"/><rect x="12" y="0" width="1" height="1" fill="#4a4a4a"/><rect x="13.5" y="2" width="1" height="1" fill="#4a4a4a"/><rect x="15" y="0" width="1" height="1" fill="#4a4a4a"/><rect x="16.5" y="2" width="1" height="1" fill="#4a4a4a"/><rect x="18" y="0" width="1" height="1" fill="#4a4a4a"/><rect x="19.5" y="2" width="1" height="1" fill="#4a4a4a"/><rect x="21" y="0" width="1" height="1" fill="#4a4a4a"/><rect x="22.5" y="2" width="1" height="1" fill="#4a4a4a"/><rect x="24" y="0" width="1" height="1" fill="#4a4a4a"/><rect x="25.5" y="2" width="1" height="1" fill="#4a4a4a"/><rect x="27" y="0" width="1" height="1" fill="#4a4a4a"/><rect x="28.5" y="2" width="1" height="1" fill="#4a4a4a"/></svg>
<svg style="position:absolute;left:4px;top:84px" width="30" height="4"><rect x="0" y="0" width="1" height="1" fill="#4a4a4a"/><rect x="1.5" y="2" width="1" height="1" fill="#4a4a4a"/><rect x="3" y="0" width="1" height="1" fill="#4a4a4a"/><rect x="4.5" y="2" width="1" height="1" fill="#4a4a4a"/><rect x="6" y="0" width="1" height="1" fill="#4a4a4a"/><rect x="7.5" y="2" width="1" height="1" fill="#4a4a4a"/><rect x="9" y="0" width="1" height="1" fill="#4a4a4a"/><rect x="10.5" y="2" width="1" height="1" fill="#4a4a4a"/><rect x="12" y="0" width="1" height="1" fill="#4a4a4a"/><rect x="13.5" y="2" width="1" height="1" fill="#4a4a4a"/><rect x="15" y="0" width="1" height="1" fill="#4a4a4a"/><rect x="16.5" y="2" width="1" height="1" fill="#4a4a4a"/><rect x="18" y="0" width="1" height="1" fill="#4a4a4a"/><rect x="19.5" y="2" width="1" height="1" fill="#4a4a4a"/><rect x="21" y="0" width="1" height="1" fill="#4a4a4a"/><rect x="22.5" y="2" width="1" height="1" fill="#4a4a4a"/><rect x="24" y="0" width="1" height="1" fill="#4a4a4a"/><rect x="25.5" y="2" width="1" height="1" fill="#4a4a4a"/><rect x="27" y="0" width="1" height="1" fill="#4a4a4a"/><rect x="28.5" y="2" width="1" height="1" fill="#4a4a4a"/></svg>
<div style="left:823px;top:82.5px;width:3px;height:584.5px;background:#1f1f1f;"></div>
<div style="left:862px;top:82.5px;width:2px;height:584.5px;background:#1c1c1c;"></div>
<div style="left:823px;top:81.5px;width:457px;height:1.5px;background:#1e1e1e;"></div>
<div style="left:864px;top:253.5px;width:416px;height:1.5px;background:#1a1a1a;"></div>
<div style="left:864px;top:664px;width:416px;height:1px;background:#1a1a1a;"></div>
<div style="left:37px;top:80px;width:1px;height:587px;background:#1f1f1f;"></div>
<div style="left:38px;top:577px;width:784px;height:3px;background:#bcbcba;"></div>
<div style="left:38px;top:580px;width:784px;height:2px;background:#1e1e1e;"></div>
<div style="left:38px;top:359px;width:1.5px;height:218px;background:#e6e6e4;opacity:0.35"></div>
<svg style="position:absolute;left:40px;top:584px" width="782" height="5"><rect x="0" y="0" width="1.2" height="1.2" fill="#454545"/><rect x="0" y="3" width="1.2" height="1.2" fill="#454545"/><rect x="3" y="0" width="1.2" height="1.2" fill="#454545"/><rect x="3" y="3" width="1.2" height="1.2" fill="#454545"/><rect x="6" y="0" width="1.2" height="1.2" fill="#454545"/><rect x="6" y="3" width="1.2" height="1.2" fill="#454545"/><rect x="9" y="0" width="1.2" height="1.2" fill="#454545"/><rect x="9" y="3" width="1.2" height="1.2" fill="#454545"/><rect x="12" y="0" width="1.2" height="1.2" fill="#454545"/><rect x="12" y="3" width="1.2" height="1.2" fill="#454545"/><rect x="15" y="0" width="1.2" height="1.2" fill="#454545"/><rect x="15" y="3" width="1.2" height="1.2" fill="#454545"/><rect x="18" y="0" width="1.2" height="1.2" fill="#454545"/><rect x="18" y="3" width="1.2" height="1.2" fill="#454545"/><rect x="21" y="0" width="1.2" height="1.2" fill="#454545"/><rect x="21" y="3" width="1.2" height="1.2" fill="#454545"/><rect x="24" y="0" width="1.2" height="1.2" fill="#454545"/><rect x="24" y="3" width="1.2" height="1.2" fill="#454545"/><rect x="27" y="0" width="1.2" height="1.2" fill="#454545"/><rect x="27" y="3" width="1.2" height="1.2" fill="#454545"/><rect x="30" y="0" width="1.2" height="1.2" fill="#454545"/><rect x="30" y="3" width="1.2" height="1.2" fill="#454545"/><rect x="33" y="0" width="1.2" height="1.2" fill="#454545"/><rect x="33" y="3" width="1.2" height="1.2" fill="#454545"/><rect x="36" y="0" width="1.2" height="1.2" fill="#454545"/><rect x="36" y="3" width="1.2" height="1.2" fill="#454545"/><rect x="39" y="0" width="1.2" height="1.2" fill="#454545"/><rect x="39" y="3" width="1.2" height="1.2" fill="#454545"/><rect x="42" y="0" width="1.2" height="1.2" fill="#454545"/><rect x="42" y="3" width="1.2" height="1.2" fill="#454545"/><rect x="45" y="0" width="1.2" height="1.2" fill="#454545"/><rect x="45" y="3" width="1.2" height="1.2" fill="#454545"/><rect x="48" y="0" width="1.2" height="1.2" fill="#454545"/><rect x="48" y="3" width="1.2" height="1.2" fill="#454545"/><rect x="51" y="0" width="1.2" height="1.2" fill="#454545"/><rect x="51" y="3" width="1.2" height="1.2" fill="#454545"/><rect x="54" y="0" width="1.2" height="1.2" fill="#454545"/><rect x="54" y="3" width="1.2" height="1.2" fill="#454545"/><rect x="57" y="0" width="1.2" height="1.2" fill="#454545"/><rect x="57" y="3" width="1.2" height="1.2" fill="#454545"/><rect x="60" y="0" width="1.2" height="1.2" fill="#454545"/><rect x="60" y="3" width="1.2" height="1.2" fill="#454545"/><rect x="63" y="0" width="1.2" height="1.2" fill="#454545"/><rect x="63" y="3" width="1.2" height="1.2" fill="#454545"/><rect x="66" y="0" width="1.2" height="1.2" fill="#454545"/><rect x="66" y="3" width="1.2" height="1.2" fill="#454545"/><rect x="69" y="0" width="1.2" height="1.2" fill="#454545"/><rect x="69" y="3" width="1.2" height="1.2" fill="#454545"/><rect x="72" y="0" width="1.2" height="1.2" fill="#454545"/><rect x="72" y="3" width="1.2" height="1.2" fill="#454545"/><rect x="75" y="0" width="1.2" height="1.2" fill="#454545"/><rect x="75" y="3" width="1.2" height="1.2" fill="#454545"/><rect x="78" y="0" width="1.2" height="1.2" fill="#454545"/><rect x="78" y="3" width="1.2" height="1.2" fill="#454545"/><rect x="81" y="0" width="1.2" height="1.2" fill="#454545"/><rect x="81" y="3" width="1.2" height="1.2" fill="#454545"/><rect x="84" y="0" width="1.2" height="1.2" fill="#454545"/><rect x="84" y="3" width="1.2" height="1.2" fill="#454545"/><rect x="87" y="0" width="1.2" height="1.2" fill="#454545"/><rect x="87" y="3" width="1.2" height="1.2" fill="#454545"/><rect x="90" y="0" width="1.2" height="1.2" fill="#454545"/><rect x="90" y="3" width="1.2" height="1.2" fill="#454545"/><rect x="93" y="0" width="1.2" height="1.2" fill="#454545"/><rect x="93" y="3" width="1.2" height="1.2" fill="#454545"/><rect x="96" y="0" width="1.2" height="1.2" fill="#454545"/><rect x="96" y="3" width="1.2" height="1.2" fill="#454545"/><rect x="99" y="0" width="1.2" height="1.2" fill="#454545"/><rect x="99" y="3" width="1.2" height="1.2" fill="#454545"/><rect x="102" y="0" width="1.2" height="1.2" fill="#454545"/><rect x="102" y="3" width="1.2" height="1.2" fill="#454545"/><rect x="105" y="0" width="1.2" height="1.2" fill="#454545"/><rect x="105" y="3" width="1.2" height="1.2" fill="#454545"/><rect x="108" y="0" width="1.2" height="1.2" fill="#454545"/><rect x="108" y="3" width="1.2" height="1.2" fill="#454545"/><rect x="111" y="0" width="1.2" height="1.2" fill="#454545"/><rect x="111" y="3" width="1.2" height="1.2" fill="#454545"/><rect x="114" y="0" width="1.2" height="1.2" fill="#454545"/><rect x="114" y="3" width="1.2" height="1.2" fill="#454545"/><rect x="117" y="0" width="1.2" height="1.2" fill="#454545"/><rect x="117" y="3" width="1.2" height="1.2" fill="#454545"/><rect x="120" y="0" width="1.2" height="1.2" fill="#454545"/><rect x="120" y="3" width="1.2" height="1.2" fill="#454545"/><rect x="123" y="0" width="1.2" height="1.2" fill="#454545"/><rect x="123" y="3" width="1.2" height="1.2" fill="#454545"/><rect x="126" y="0" width="1.2" height="1.2" fill="#454545"/><rect x="126" y="3" width="1.2" height="1.2" fill="#454545"/><rect x="129" y="0" width="1.2" height="1.2" fill="#454545"/><rect x="129" y="3" width="1.2" height="1.2" fill="#454545"/><rect x="132" y="0" width="1.2" height="1.2" fill="#454545"/><rect x="132" y="3" width="1.2" height="1.2" fill="#454545"/><rect x="135" y="0" width="1.2" height="1.2" fill="#454545"/><rect x="135" y="3" width="1.2" height="1.2" fill="#454545"/><rect x="138" y="0" width="1.2" height="1.2" fill="#454545"/><rect x="138" y="3" width="1.2" height="1.2" fill="#454545"/><rect x="141" y="0" width="1.2" height="1.2" fill="#454545"/><rect x="141" y="3" width="1.2" height="1.2" fill="#454545"/><rect x="144" y="0" width="1.2" height="1.2" fill="#454545"/><rect x="144" y="3" width="1.2" height="1.2" fill="#454545"/><rect x="147" y="0" width="1.2" height="1.2" fill="#454545"/><rect x="147" y="3" width="1.2" height="1.2" fill="#454545"/><rect x="150" y="0" width="1.2" height="1.2" fill="#454545"/><rect x="150" y="3" width="1.2" height="1.2" fill="#454545"/><rect x="153" y="0" width="1.2" height="1.2" fill="#454545"/><rect x="153" y="3" width="1.2" height="1.2" fill="#454545"/><rect x="156" y="0" width="1.2" height="1.2" fill="#454545"/><rect x="156" y="3" width="1.2" height="1.2" fill="#454545"/><rect x="159" y="0" width="1.2" height="1.2" fill="#454545"/><rect x="159" y="3" width="1.2" height="1.2" fill="#454545"/><rect x="162" y="0" width="1.2" height="1.2" fill="#454545"/><rect x="162" y="3" width="1.2" height="1.2" fill="#454545"/><rect x="165" y="0" width="1.2" height="1.2" fill="#454545"/><rect x="165" y="3" width="1.2" height="1.2" fill="#454545"/><rect x="168" y="0" width="1.2" height="1.2" fill="#454545"/><rect x="168" y="3" width="1.2" height="1.2" fill="#454545"/><rect x="171" y="0" width="1.2" height="1.2" fill="#454545"/><rect x="171" y="3" width="1.2" height="1.2" fill="#454545"/><rect x="174" y="0" width="1.2" height="1.2" fill="#454545"/><rect x="174" y="3" width="1.2" height="1.2" fill="#454545"/><rect x="177" y="0" width="1.2" height="1.2" fill="#454545"/><rect x="177" y="3" width="1.2" height="1.2" fill="#454545"/><rect x="180" y="0" width="1.2" height="1.2" fill="#454545"/><rect x="180" y="3" width="1.2" height="1.2" fill="#454545"/><rect x="183" y="0" width="1.2" height="1.2" fill="#454545"/><rect x="183" y="3" width="1.2" height="1.2" fill="#454545"/><rect x="186" y="0" width="1.2" height="1.2" fill="#454545"/><rect x="186" y="3" width="1.2" height="1.2" fill="#454545"/><rect x="189" y="0" width="1.2" height="1.2" fill="#454545"/><rect x="189" y="3" width="1.2" height="1.2" fill="#454545"/><rect x="192" y="0" width="1.2" height="1.2" fill="#454545"/><rect x="192" y="3" width="1.2" height="1.2" fill="#454545"/><rect x="195" y="0" width="1.2" height="1.2" fill="#454545"/><rect x="195" y="3" width="1.2" height="1.2" fill="#454545"/><rect x="198" y="0" width="1.2" height="1.2" fill="#454545"/><rect x="198" y="3" width="1.2" height="1.2" fill="#454545"/><rect x="201" y="0" width="1.2" height="1.2" fill="#454545"/><rect x="201" y="3" width="1.2" height="1.2" fill="#454545"/><rect x="204" y="0" width="1.2" height="1.2" fill="#454545"/><rect x="204" y="3" width="1.2" height="1.2" fill="#454545"/><rect x="207" y="0" width="1.2" height="1.2" fill="#454545"/><rect x="207" y="3" width="1.2" height="1.2" fill="#454545"/><rect x="210" y="0" width="1.2" height="1.2" fill="#454545"/><rect x="210" y="3" width="1.2" height="1.2" fill="#454545"/><rect x="213" y="0" width="1.2" height="1.2" fill="#454545"/><rect x="213" y="3" width="1.2" height="1.2" fill="#454545"/><rect x="216" y="0" width="1.2" height="1.2" fill="#454545"/><rect x="216" y="3" width="1.2" height="1.2" fill="#454545"/><rect x="219" y="0" width="1.2" height="1.2" fill="#454545"/><rect x="219" y="3" width="1.2" height="1.2" fill="#454545"/><rect x="222" y="0" width="1.2" height="1.2" fill="#454545"/><rect x="222" y="3" width="1.2" height="1.2" fill="#454545"/><rect x="225" y="0" width="1.2" height="1.2" fill="#454545"/><rect x="225" y="3" width="1.2" height="1.2" fill="#454545"/><rect x="228" y="0" width="1.2" height="1.2" fill="#454545"/><rect x="228" y="3" width="1.2" height="1.2" fill="#454545"/><rect x="231" y="0" width="1.2" height="1.2" fill="#454545"/><rect x="231" y="3" width="1.2" height="1.2" fill="#454545"/><rect x="234" y="0" width="1.2" height="1.2" fill="#454545"/><rect x="234" y="3" width="1.2" height="1.2" fill="#454545"/><rect x="237" y="0" width="1.2" height="1.2" fill="#454545"/><rect x="237" y="3" width="1.2" height="1.2" fill="#454545"/><rect x="240" y="0" width="1.2" height="1.2" fill="#454545"/><rect x="240" y="3" width="1.2" height="1.2" fill="#454545"/><rect x="243" y="0" width="1.2" height="1.2" fill="#454545"/><rect x="243" y="3" width="1.2" height="1.2" fill="#454545"/><rect x="246" y="0" width="1.2" height="1.2" fill="#454545"/><rect x="246" y="3" width="1.2" height="1.2" fill="#454545"/><rect x="249" y="0" width="1.2" height="1.2" fill="#454545"/><rect x="249" y="3" width="1.2" height="1.2" fill="#454545"/><rect x="252" y="0" width="1.2" height="1.2" fill="#454545"/><rect x="252" y="3" width="1.2" height="1.2" fill="#454545"/><rect x="255" y="0" width="1.2" height="1.2" fill="#454545"/><rect x="255" y="3" width="1.2" height="1.2" fill="#454545"/><rect x="258" y="0" width="1.2" height="1.2" fill="#454545"/><rect x="258" y="3" width="1.2" height="1.2" fill="#454545"/><rect x="261" y="0" width="1.2" height="1.2" fill="#454545"/><rect x="261" y="3" width="1.2" height="1.2" fill="#454545"/><rect x="264" y="0" width="1.2" height="1.2" fill="#454545"/><rect x="264" y="3" width="1.2" height="1.2" fill="#454545"/><rect x="267" y="0" width="1.2" height="1.2" fill="#454545"/><rect x="267" y="3" width="1.2" height="1.2" fill="#454545"/><rect x="270" y="0" width="1.2" height="1.2" fill="#454545"/><rect x="270" y="3" width="1.2" height="1.2" fill="#454545"/><rect x="273" y="0" width="1.2" height="1.2" fill="#454545"/><rect x="273" y="3" width="1.2" height="1.2" fill="#454545"/><rect x="276" y="0" width="1.2" height="1.2" fill="#454545"/><rect x="276" y="3" width="1.2" height="1.2" fill="#454545"/><rect x="279" y="0" width="1.2" height="1.2" fill="#454545"/><rect x="279" y="3" width="1.2" height="1.2" fill="#454545"/><rect x="282" y="0" width="1.2" height="1.2" fill="#454545"/><rect x="282" y="3" width="1.2" height="1.2" fill="#454545"/><rect x="285" y="0" width="1.2" height="1.2" fill="#454545"/><rect x="285" y="3" width="1.2" height="1.2" fill="#454545"/><rect x="288" y="0" width="1.2" height="1.2" fill="#454545"/><rect x="288" y="3" width="1.2" height="1.2" fill="#454545"/><rect x="291" y="0" width="1.2" height="1.2" fill="#454545"/><rect x="291" y="3" width="1.2" height="1.2" fill="#454545"/><rect x="294" y="0" width="1.2" height="1.2" fill="#454545"/><rect x="294" y="3" width="1.2" height="1.2" fill="#454545"/><rect x="297" y="0" width="1.2" height="1.2" fill="#454545"/><rect x="297" y="3" width="1.2" height="1.2" fill="#454545"/><rect x="300" y="0" width="1.2" height="1.2" fill="#454545"/><rect x="300" y="3" width="1.2" height="1.2" fill="#454545"/><rect x="303" y="0" width="1.2" height="1.2" fill="#454545"/><rect x="303" y="3" width="1.2" height="1.2" fill="#454545"/><rect x="306" y="0" width="1.2" height="1.2" fill="#454545"/><rect x="306" y="3" width="1.2" height="1.2" fill="#454545"/><rect x="309" y="0" width="1.2" height="1.2" fill="#454545"/><rect x="309" y="3" width="1.2" height="1.2" fill="#454545"/><rect x="312" y="0" width="1.2" height="1.2" fill="#454545"/><rect x="312" y="3" width="1.2" height="1.2" fill="#454545"/><rect x="315" y="0" width="1.2" height="1.2" fill="#454545"/><rect x="315" y="3" width="1.2" height="1.2" fill="#454545"/><rect x="318" y="0" width="1.2" height="1.2" fill="#454545"/><rect x="318" y="3" width="1.2" height="1.2" fill="#454545"/><rect x="321" y="0" width="1.2" height="1.2" fill="#454545"/><rect x="321" y="3" width="1.2" height="1.2" fill="#454545"/><rect x="324" y="0" width="1.2" height="1.2" fill="#454545"/><rect x="324" y="3" width="1.2" height="1.2" fill="#454545"/><rect x="327" y="0" width="1.2" height="1.2" fill="#454545"/><rect x="327" y="3" width="1.2" height="1.2" fill="#454545"/><rect x="330" y="0" width="1.2" height="1.2" fill="#454545"/><rect x="330" y="3" width="1.2" height="1.2" fill="#454545"/><rect x="333" y="0" width="1.2" height="1.2" fill="#454545"/><rect x="333" y="3" width="1.2" height="1.2" fill="#454545"/><rect x="336" y="0" width="1.2" height="1.2" fill="#454545"/><rect x="336" y="3" width="1.2" height="1.2" fill="#454545"/><rect x="339" y="0" width="1.2" height="1.2" fill="#454545"/><rect x="339" y="3" width="1.2" height="1.2" fill="#454545"/><rect x="342" y="0" width="1.2" height="1.2" fill="#454545"/><rect x="342" y="3" width="1.2" height="1.2" fill="#454545"/><rect x="345" y="0" width="1.2" height="1.2" fill="#454545"/><rect x="345" y="3" width="1.2" height="1.2" fill="#454545"/><rect x="348" y="0" width="1.2" height="1.2" fill="#454545"/><rect x="348" y="3" width="1.2" height="1.2" fill="#454545"/><rect x="351" y="0" width="1.2" height="1.2" fill="#454545"/><rect x="351" y="3" width="1.2" height="1.2" fill="#454545"/><rect x="354" y="0" width="1.2" height="1.2" fill="#454545"/><rect x="354" y="3" width="1.2" height="1.2" fill="#454545"/><rect x="357" y="0" width="1.2" height="1.2" fill="#454545"/><rect x="357" y="3" width="1.2" height="1.2" fill="#454545"/><rect x="360" y="0" width="1.2" height="1.2" fill="#454545"/><rect x="360" y="3" width="1.2" height="1.2" fill="#454545"/><rect x="363" y="0" width="1.2" height="1.2" fill="#454545"/><rect x="363" y="3" width="1.2" height="1.2" fill="#454545"/><rect x="366" y="0" width="1.2" height="1.2" fill="#454545"/><rect x="366" y="3" width="1.2" height="1.2" fill="#454545"/><rect x="369" y="0" width="1.2" height="1.2" fill="#454545"/><rect x="369" y="3" width="1.2" height="1.2" fill="#454545"/><rect x="372" y="0" width="1.2" height="1.2" fill="#454545"/><rect x="372" y="3" width="1.2" height="1.2" fill="#454545"/><rect x="375" y="0" width="1.2" height="1.2" fill="#454545"/><rect x="375" y="3" width="1.2" height="1.2" fill="#454545"/><rect x="378" y="0" width="1.2" height="1.2" fill="#454545"/><rect x="378" y="3" width="1.2" height="1.2" fill="#454545"/><rect x="381" y="0" width="1.2" height="1.2" fill="#454545"/><rect x="381" y="3" width="1.2" height="1.2" fill="#454545"/><rect x="384" y="0" width="1.2" height="1.2" fill="#454545"/><rect x="384" y="3" width="1.2" height="1.2" fill="#454545"/><rect x="387" y="0" width="1.2" height="1.2" fill="#454545"/><rect x="387" y="3" width="1.2" height="1.2" fill="#454545"/><rect x="390" y="0" width="1.2" height="1.2" fill="#454545"/><rect x="390" y="3" width="1.2" height="1.2" fill="#454545"/><rect x="393" y="0" width="1.2" height="1.2" fill="#454545"/><rect x="393" y="3" width="1.2" height="1.2" fill="#454545"/><rect x="396" y="0" width="1.2" height="1.2" fill="#454545"/><rect x="396" y="3" width="1.2" height="1.2" fill="#454545"/><rect x="399" y="0" width="1.2" height="1.2" fill="#454545"/><rect x="399" y="3" width="1.2" height="1.2" fill="#454545"/><rect x="402" y="0" width="1.2" height="1.2" fill="#454545"/><rect x="402" y="3" width="1.2" height="1.2" fill="#454545"/><rect x="405" y="0" width="1.2" height="1.2" fill="#454545"/><rect x="405" y="3" width="1.2" height="1.2" fill="#454545"/><rect x="408" y="0" width="1.2" height="1.2" fill="#454545"/><rect x="408" y="3" width="1.2" height="1.2" fill="#454545"/><rect x="411" y="0" width="1.2" height="1.2" fill="#454545"/><rect x="411" y="3" width="1.2" height="1.2" fill="#454545"/><rect x="414" y="0" width="1.2" height="1.2" fill="#454545"/><rect x="414" y="3" width="1.2" height="1.2" fill="#454545"/><rect x="417" y="0" width="1.2" height="1.2" fill="#454545"/><rect x="417" y="3" width="1.2" height="1.2" fill="#454545"/><rect x="420" y="0" width="1.2" height="1.2" fill="#454545"/><rect x="420" y="3" width="1.2" height="1.2" fill="#454545"/><rect x="423" y="0" width="1.2" height="1.2" fill="#454545"/><rect x="423" y="3" width="1.2" height="1.2" fill="#454545"/><rect x="426" y="0" width="1.2" height="1.2" fill="#454545"/><rect x="426" y="3" width="1.2" height="1.2" fill="#454545"/><rect x="429" y="0" width="1.2" height="1.2" fill="#454545"/><rect x="429" y="3" width="1.2" height="1.2" fill="#454545"/><rect x="432" y="0" width="1.2" height="1.2" fill="#454545"/><rect x="432" y="3" width="1.2" height="1.2" fill="#454545"/><rect x="435" y="0" width="1.2" height="1.2" fill="#454545"/><rect x="435" y="3" width="1.2" height="1.2" fill="#454545"/><rect x="438" y="0" width="1.2" height="1.2" fill="#454545"/><rect x="438" y="3" width="1.2" height="1.2" fill="#454545"/><rect x="441" y="0" width="1.2" height="1.2" fill="#454545"/><rect x="441" y="3" width="1.2" height="1.2" fill="#454545"/><rect x="444" y="0" width="1.2" height="1.2" fill="#454545"/><rect x="444" y="3" width="1.2" height="1.2" fill="#454545"/><rect x="447" y="0" width="1.2" height="1.2" fill="#454545"/><rect x="447" y="3" width="1.2" height="1.2" fill="#454545"/><rect x="450" y="0" width="1.2" height="1.2" fill="#454545"/><rect x="450" y="3" width="1.2" height="1.2" fill="#454545"/><rect x="453" y="0" width="1.2" height="1.2" fill="#454545"/><rect x="453" y="3" width="1.2" height="1.2" fill="#454545"/><rect x="456" y="0" width="1.2" height="1.2" fill="#454545"/><rect x="456" y="3" width="1.2" height="1.2" fill="#454545"/><rect x="459" y="0" width="1.2" height="1.2" fill="#454545"/><rect x="459" y="3" width="1.2" height="1.2" fill="#454545"/><rect x="462" y="0" width="1.2" height="1.2" fill="#454545"/><rect x="462" y="3" width="1.2" height="1.2" fill="#454545"/><rect x="465" y="0" width="1.2" height="1.2" fill="#454545"/><rect x="465" y="3" width="1.2" height="1.2" fill="#454545"/><rect x="468" y="0" width="1.2" height="1.2" fill="#454545"/><rect x="468" y="3" width="1.2" height="1.2" fill="#454545"/><rect x="471" y="0" width="1.2" height="1.2" fill="#454545"/><rect x="471" y="3" width="1.2" height="1.2" fill="#454545"/><rect x="474" y="0" width="1.2" height="1.2" fill="#454545"/><rect x="474" y="3" width="1.2" height="1.2" fill="#454545"/><rect x="477" y="0" width="1.2" height="1.2" fill="#454545"/><rect x="477" y="3" width="1.2" height="1.2" fill="#454545"/><rect x="480" y="0" width="1.2" height="1.2" fill="#454545"/><rect x="480" y="3" width="1.2" height="1.2" fill="#454545"/><rect x="483" y="0" width="1.2" height="1.2" fill="#454545"/><rect x="483" y="3" width="1.2" height="1.2" fill="#454545"/><rect x="486" y="0" width="1.2" height="1.2" fill="#454545"/><rect x="486" y="3" width="1.2" height="1.2" fill="#454545"/><rect x="489" y="0" width="1.2" height="1.2" fill="#454545"/><rect x="489" y="3" width="1.2" height="1.2" fill="#454545"/><rect x="492" y="0" width="1.2" height="1.2" fill="#454545"/><rect x="492" y="3" width="1.2" height="1.2" fill="#454545"/><rect x="495" y="0" width="1.2" height="1.2" fill="#454545"/><rect x="495" y="3" width="1.2" height="1.2" fill="#454545"/><rect x="498" y="0" width="1.2" height="1.2" fill="#454545"/><rect x="498" y="3" width="1.2" height="1.2" fill="#454545"/><rect x="501" y="0" width="1.2" height="1.2" fill="#454545"/><rect x="501" y="3" width="1.2" height="1.2" fill="#454545"/><rect x="504" y="0" width="1.2" height="1.2" fill="#454545"/><rect x="504" y="3" width="1.2" height="1.2" fill="#454545"/><rect x="507" y="0" width="1.2" height="1.2" fill="#454545"/><rect x="507" y="3" width="1.2" height="1.2" fill="#454545"/><rect x="510" y="0" width="1.2" height="1.2" fill="#454545"/><rect x="510" y="3" width="1.2" height="1.2" fill="#454545"/><rect x="513" y="0" width="1.2" height="1.2" fill="#454545"/><rect x="513" y="3" width="1.2" height="1.2" fill="#454545"/><rect x="516" y="0" width="1.2" height="1.2" fill="#454545"/><rect x="516" y="3" width="1.2" height="1.2" fill="#454545"/><rect x="519" y="0" width="1.2" height="1.2" fill="#454545"/><rect x="519" y="3" width="1.2" height="1.2" fill="#454545"/><rect x="522" y="0" width="1.2" height="1.2" fill="#454545"/><rect x="522" y="3" width="1.2" height="1.2" fill="#454545"/><rect x="525" y="0" width="1.2" height="1.2" fill="#454545"/><rect x="525" y="3" width="1.2" height="1.2" fill="#454545"/><rect x="528" y="0" width="1.2" height="1.2" fill="#454545"/><rect x="528" y="3" width="1.2" height="1.2" fill="#454545"/><rect x="531" y="0" width="1.2" height="1.2" fill="#454545"/><rect x="531" y="3" width="1.2" height="1.2" fill="#454545"/><rect x="534" y="0" width="1.2" height="1.2" fill="#454545"/><rect x="534" y="3" width="1.2" height="1.2" fill="#454545"/><rect x="537" y="0" width="1.2" height="1.2" fill="#454545"/><rect x="537" y="3" width="1.2" height="1.2" fill="#454545"/><rect x="540" y="0" width="1.2" height="1.2" fill="#454545"/><rect x="540" y="3" width="1.2" height="1.2" fill="#454545"/><rect x="543" y="0" width="1.2" height="1.2" fill="#454545"/><rect x="543" y="3" width="1.2" height="1.2" fill="#454545"/><rect x="546" y="0" width="1.2" height="1.2" fill="#454545"/><rect x="546" y="3" width="1.2" height="1.2" fill="#454545"/><rect x="549" y="0" width="1.2" height="1.2" fill="#454545"/><rect x="549" y="3" width="1.2" height="1.2" fill="#454545"/><rect x="552" y="0" width="1.2" height="1.2" fill="#454545"/><rect x="552" y="3" width="1.2" height="1.2" fill="#454545"/><rect x="555" y="0" width="1.2" height="1.2" fill="#454545"/><rect x="555" y="3" width="1.2" height="1.2" fill="#454545"/><rect x="558" y="0" width="1.2" height="1.2" fill="#454545"/><rect x="558" y="3" width="1.2" height="1.2" fill="#454545"/><rect x="561" y="0" width="1.2" height="1.2" fill="#454545"/><rect x="561" y="3" width="1.2" height="1.2" fill="#454545"/><rect x="564" y="0" width="1.2" height="1.2" fill="#454545"/><rect x="564" y="3" width="1.2" height="1.2" fill="#454545"/><rect x="567" y="0" width="1.2" height="1.2" fill="#454545"/><rect x="567" y="3" width="1.2" height="1.2" fill="#454545"/><rect x="570" y="0" width="1.2" height="1.2" fill="#454545"/><rect x="570" y="3" width="1.2" height="1.2" fill="#454545"/><rect x="573" y="0" width="1.2" height="1.2" fill="#454545"/><rect x="573" y="3" width="1.2" height="1.2" fill="#454545"/><rect x="576" y="0" width="1.2" height="1.2" fill="#454545"/><rect x="576" y="3" width="1.2" height="1.2" fill="#454545"/><rect x="579" y="0" width="1.2" height="1.2" fill="#454545"/><rect x="579" y="3" width="1.2" height="1.2" fill="#454545"/><rect x="582" y="0" width="1.2" height="1.2" fill="#454545"/><rect x="582" y="3" width="1.2" height="1.2" fill="#454545"/><rect x="585" y="0" width="1.2" height="1.2" fill="#454545"/><rect x="585" y="3" width="1.2" height="1.2" fill="#454545"/><rect x="588" y="0" width="1.2" height="1.2" fill="#454545"/><rect x="588" y="3" width="1.2" height="1.2" fill="#454545"/><rect x="591" y="0" width="1.2" height="1.2" fill="#454545"/><rect x="591" y="3" width="1.2" height="1.2" fill="#454545"/><rect x="594" y="0" width="1.2" height="1.2" fill="#454545"/><rect x="594" y="3" width="1.2" height="1.2" fill="#454545"/><rect x="597" y="0" width="1.2" height="1.2" fill="#454545"/><rect x="597" y="3" width="1.2" height="1.2" fill="#454545"/><rect x="600" y="0" width="1.2" height="1.2" fill="#454545"/><rect x="600" y="3" width="1.2" height="1.2" fill="#454545"/><rect x="603" y="0" width="1.2" height="1.2" fill="#454545"/><rect x="603" y="3" width="1.2" height="1.2" fill="#454545"/><rect x="606" y="0" width="1.2" height="1.2" fill="#454545"/><rect x="606" y="3" width="1.2" height="1.2" fill="#454545"/><rect x="609" y="0" width="1.2" height="1.2" fill="#454545"/><rect x="609" y="3" width="1.2" height="1.2" fill="#454545"/><rect x="612" y="0" width="1.2" height="1.2" fill="#454545"/><rect x="612" y="3" width="1.2" height="1.2" fill="#454545"/><rect x="615" y="0" width="1.2" height="1.2" fill="#454545"/><rect x="615" y="3" width="1.2" height="1.2" fill="#454545"/><rect x="618" y="0" width="1.2" height="1.2" fill="#454545"/><rect x="618" y="3" width="1.2" height="1.2" fill="#454545"/><rect x="621" y="0" width="1.2" height="1.2" fill="#454545"/><rect x="621" y="3" width="1.2" height="1.2" fill="#454545"/><rect x="624" y="0" width="1.2" height="1.2" fill="#454545"/><rect x="624" y="3" width="1.2" height="1.2" fill="#454545"/><rect x="627" y="0" width="1.2" height="1.2" fill="#454545"/><rect x="627" y="3" width="1.2" height="1.2" fill="#454545"/><rect x="630" y="0" width="1.2" height="1.2" fill="#454545"/><rect x="630" y="3" width="1.2" height="1.2" fill="#454545"/><rect x="633" y="0" width="1.2" height="1.2" fill="#454545"/><rect x="633" y="3" width="1.2" height="1.2" fill="#454545"/><rect x="636" y="0" width="1.2" height="1.2" fill="#454545"/><rect x="636" y="3" width="1.2" height="1.2" fill="#454545"/><rect x="639" y="0" width="1.2" height="1.2" fill="#454545"/><rect x="639" y="3" width="1.2" height="1.2" fill="#454545"/><rect x="642" y="0" width="1.2" height="1.2" fill="#454545"/><rect x="642" y="3" width="1.2" height="1.2" fill="#454545"/><rect x="645" y="0" width="1.2" height="1.2" fill="#454545"/><rect x="645" y="3" width="1.2" height="1.2" fill="#454545"/><rect x="648" y="0" width="1.2" height="1.2" fill="#454545"/><rect x="648" y="3" width="1.2" height="1.2" fill="#454545"/><rect x="651" y="0" width="1.2" height="1.2" fill="#454545"/><rect x="651" y="3" width="1.2" height="1.2" fill="#454545"/><rect x="654" y="0" width="1.2" height="1.2" fill="#454545"/><rect x="654" y="3" width="1.2" height="1.2" fill="#454545"/><rect x="657" y="0" width="1.2" height="1.2" fill="#454545"/><rect x="657" y="3" width="1.2" height="1.2" fill="#454545"/><rect x="660" y="0" width="1.2" height="1.2" fill="#454545"/><rect x="660" y="3" width="1.2" height="1.2" fill="#454545"/><rect x="663" y="0" width="1.2" height="1.2" fill="#454545"/><rect x="663" y="3" width="1.2" height="1.2" fill="#454545"/><rect x="666" y="0" width="1.2" height="1.2" fill="#454545"/><rect x="666" y="3" width="1.2" height="1.2" fill="#454545"/><rect x="669" y="0" width="1.2" height="1.2" fill="#454545"/><rect x="669" y="3" width="1.2" height="1.2" fill="#454545"/><rect x="672" y="0" width="1.2" height="1.2" fill="#454545"/><rect x="672" y="3" width="1.2" height="1.2" fill="#454545"/><rect x="675" y="0" width="1.2" height="1.2" fill="#454545"/><rect x="675" y="3" width="1.2" height="1.2" fill="#454545"/><rect x="678" y="0" width="1.2" height="1.2" fill="#454545"/><rect x="678" y="3" width="1.2" height="1.2" fill="#454545"/><rect x="681" y="0" width="1.2" height="1.2" fill="#454545"/><rect x="681" y="3" width="1.2" height="1.2" fill="#454545"/><rect x="684" y="0" width="1.2" height="1.2" fill="#454545"/><rect x="684" y="3" width="1.2" height="1.2" fill="#454545"/><rect x="687" y="0" width="1.2" height="1.2" fill="#454545"/><rect x="687" y="3" width="1.2" height="1.2" fill="#454545"/><rect x="690" y="0" width="1.2" height="1.2" fill="#454545"/><rect x="690" y="3" width="1.2" height="1.2" fill="#454545"/><rect x="693" y="0" width="1.2" height="1.2" fill="#454545"/><rect x="693" y="3" width="1.2" height="1.2" fill="#454545"/><rect x="696" y="0" width="1.2" height="1.2" fill="#454545"/><rect x="696" y="3" width="1.2" height="1.2" fill="#454545"/><rect x="699" y="0" width="1.2" height="1.2" fill="#454545"/><rect x="699" y="3" width="1.2" height="1.2" fill="#454545"/><rect x="702" y="0" width="1.2" height="1.2" fill="#454545"/><rect x="702" y="3" width="1.2" height="1.2" fill="#454545"/><rect x="705" y="0" width="1.2" height="1.2" fill="#454545"/><rect x="705" y="3" width="1.2" height="1.2" fill="#454545"/><rect x="708" y="0" width="1.2" height="1.2" fill="#454545"/><rect x="708" y="3" width="1.2" height="1.2" fill="#454545"/><rect x="711" y="0" width="1.2" height="1.2" fill="#454545"/><rect x="711" y="3" width="1.2" height="1.2" fill="#454545"/><rect x="714" y="0" width="1.2" height="1.2" fill="#454545"/><rect x="714" y="3" width="1.2" height="1.2" fill="#454545"/><rect x="717" y="0" width="1.2" height="1.2" fill="#454545"/><rect x="717" y="3" width="1.2" height="1.2" fill="#454545"/><rect x="720" y="0" width="1.2" height="1.2" fill="#454545"/><rect x="720" y="3" width="1.2" height="1.2" fill="#454545"/><rect x="723" y="0" width="1.2" height="1.2" fill="#454545"/><rect x="723" y="3" width="1.2" height="1.2" fill="#454545"/><rect x="726" y="0" width="1.2" height="1.2" fill="#454545"/><rect x="726" y="3" width="1.2" height="1.2" fill="#454545"/><rect x="729" y="0" width="1.2" height="1.2" fill="#454545"/><rect x="729" y="3" width="1.2" height="1.2" fill="#454545"/><rect x="732" y="0" width="1.2" height="1.2" fill="#454545"/><rect x="732" y="3" width="1.2" height="1.2" fill="#454545"/><rect x="735" y="0" width="1.2" height="1.2" fill="#454545"/><rect x="735" y="3" width="1.2" height="1.2" fill="#454545"/><rect x="738" y="0" width="1.2" height="1.2" fill="#454545"/><rect x="738" y="3" width="1.2" height="1.2" fill="#454545"/><rect x="741" y="0" width="1.2" height="1.2" fill="#454545"/><rect x="741" y="3" width="1.2" height="1.2" fill="#454545"/><rect x="744" y="0" width="1.2" height="1.2" fill="#454545"/><rect x="744" y="3" width="1.2" height="1.2" fill="#454545"/><rect x="747" y="0" width="1.2" height="1.2" fill="#454545"/><rect x="747" y="3" width="1.2" height="1.2" fill="#454545"/><rect x="750" y="0" width="1.2" height="1.2" fill="#454545"/><rect x="750" y="3" width="1.2" height="1.2" fill="#454545"/><rect x="753" y="0" width="1.2" height="1.2" fill="#454545"/><rect x="753" y="3" width="1.2" height="1.2" fill="#454545"/><rect x="756" y="0" width="1.2" height="1.2" fill="#454545"/><rect x="756" y="3" width="1.2" height="1.2" fill="#454545"/><rect x="759" y="0" width="1.2" height="1.2" fill="#454545"/><rect x="759" y="3" width="1.2" height="1.2" fill="#454545"/><rect x="762" y="0" width="1.2" height="1.2" fill="#454545"/><rect x="762" y="3" width="1.2" height="1.2" fill="#454545"/><rect x="765" y="0" width="1.2" height="1.2" fill="#454545"/><rect x="765" y="3" width="1.2" height="1.2" fill="#454545"/><rect x="768" y="0" width="1.2" height="1.2" fill="#454545"/><rect x="768" y="3" width="1.2" height="1.2" fill="#454545"/><rect x="771" y="0" width="1.2" height="1.2" fill="#454545"/><rect x="771" y="3" width="1.2" height="1.2" fill="#454545"/><rect x="774" y="0" width="1.2" height="1.2" fill="#454545"/><rect x="774" y="3" width="1.2" height="1.2" fill="#454545"/><rect x="777" y="0" width="1.2" height="1.2" fill="#454545"/><rect x="777" y="3" width="1.2" height="1.2" fill="#454545"/></svg>
<svg style="position:absolute;left:39px;top:590px" width="5" height="75"><rect x="0" y="0" width="1.2" height="1.2" fill="#3e3e3e"/><rect x="3" y="0" width="1.2" height="1.2" fill="#3e3e3e"/><rect x="0" y="3" width="1.2" height="1.2" fill="#3e3e3e"/><rect x="3" y="3" width="1.2" height="1.2" fill="#3e3e3e"/><rect x="0" y="6" width="1.2" height="1.2" fill="#3e3e3e"/><rect x="3" y="6" width="1.2" height="1.2" fill="#3e3e3e"/><rect x="0" y="9" width="1.2" height="1.2" fill="#3e3e3e"/><rect x="3" y="9" width="1.2" height="1.2" fill="#3e3e3e"/><rect x="0" y="12" width="1.2" height="1.2" fill="#3e3e3e"/><rect x="3" y="12" width="1.2" height="1.2" fill="#3e3e3e"/><rect x="0" y="15" width="1.2" height="1.2" fill="#3e3e3e"/><rect x="3" y="15" width="1.2" height="1.2" fill="#3e3e3e"/><rect x="0" y="18" width="1.2" height="1.2" fill="#3e3e3e"/><rect x="3" y="18" width="1.2" height="1.2" fill="#3e3e3e"/><rect x="0" y="21" width="1.2" height="1.2" fill="#3e3e3e"/><rect x="3" y="21" width="1.2" height="1.2" fill="#3e3e3e"/><rect x="0" y="24" width="1.2" height="1.2" fill="#3e3e3e"/><rect x="3" y="24" width="1.2" height="1.2" fill="#3e3e3e"/><rect x="0" y="27" width="1.2" height="1.2" fill="#3e3e3e"/><rect x="3" y="27" width="1.2" height="1.2" fill="#3e3e3e"/><rect x="0" y="30" width="1.2" height="1.2" fill="#3e3e3e"/><rect x="3" y="30" width="1.2" height="1.2" fill="#3e3e3e"/><rect x="0" y="33" width="1.2" height="1.2" fill="#3e3e3e"/><rect x="3" y="33" width="1.2" height="1.2" fill="#3e3e3e"/><rect x="0" y="36" width="1.2" height="1.2" fill="#3e3e3e"/><rect x="3" y="36" width="1.2" height="1.2" fill="#3e3e3e"/><rect x="0" y="39" width="1.2" height="1.2" fill="#3e3e3e"/><rect x="3" y="39" width="1.2" height="1.2" fill="#3e3e3e"/><rect x="0" y="42" width="1.2" height="1.2" fill="#3e3e3e"/><rect x="3" y="42" width="1.2" height="1.2" fill="#3e3e3e"/><rect x="0" y="45" width="1.2" height="1.2" fill="#3e3e3e"/><rect x="3" y="45" width="1.2" height="1.2" fill="#3e3e3e"/><rect x="0" y="48" width="1.2" height="1.2" fill="#3e3e3e"/><rect x="3" y="48" width="1.2" height="1.2" fill="#3e3e3e"/><rect x="0" y="51" width="1.2" height="1.2" fill="#3e3e3e"/><rect x="3" y="51" width="1.2" height="1.2" fill="#3e3e3e"/><rect x="0" y="54" width="1.2" height="1.2" fill="#3e3e3e"/><rect x="3" y="54" width="1.2" height="1.2" fill="#3e3e3e"/><rect x="0" y="57" width="1.2" height="1.2" fill="#3e3e3e"/><rect x="3" y="57" width="1.2" height="1.2" fill="#3e3e3e"/><rect x="0" y="60" width="1.2" height="1.2" fill="#3e3e3e"/><rect x="3" y="60" width="1.2" height="1.2" fill="#3e3e3e"/><rect x="0" y="63" width="1.2" height="1.2" fill="#3e3e3e"/><rect x="3" y="63" width="1.2" height="1.2" fill="#3e3e3e"/><rect x="0" y="66" width="1.2" height="1.2" fill="#3e3e3e"/><rect x="3" y="66" width="1.2" height="1.2" fill="#3e3e3e"/><rect x="0" y="69" width="1.2" height="1.2" fill="#3e3e3e"/><rect x="3" y="69" width="1.2" height="1.2" fill="#3e3e3e"/><rect x="0" y="72" width="1.2" height="1.2" fill="#3e3e3e"/><rect x="3" y="72" width="1.2" height="1.2" fill="#3e3e3e"/></svg>
<div style="left:110.0px;top:84px;width:1px;height:26px;background:#303030;"></div>
<div style="left:137.5px;top:84px;width:1px;height:26px;background:#303030;"></div>
<div style="left:165.0px;top:84px;width:1px;height:26px;background:#303030;"></div>
<div style="left:235.2px;top:84px;width:1px;height:26px;background:#303030;"></div>
<div style="left:262.5px;top:84px;width:1px;height:26px;background:#303030;"></div>
<div style="left:320.5px;top:84px;width:1px;height:26px;background:#303030;"></div>
<div style="left:387.1px;top:84px;width:1px;height:26px;background:#303030;"></div>
<div style="left:462.5px;top:84px;width:1px;height:26px;background:#303030;"></div>
<div style="left:529.5px;top:84px;width:1px;height:26px;background:#303030;"></div>
<div style="left:595.5px;top:84px;width:1px;height:26px;background:#303030;"></div>
<div style="left:661.5px;top:84px;width:1px;height:26px;background:#303030;"></div>
<div style="left:729.8px;top:84px;width:1px;height:26px;background:#303030;"></div>
<div style="left:757.9px;top:84px;width:1px;height:26px;background:#303030;"></div>
<div style="left:505.0px;top:592px;width:1px;height:26px;background:#303030;"></div>
<div style="left:532.5px;top:592px;width:1px;height:26px;background:#303030;"></div>
<div style="left:598.5px;top:592px;width:1px;height:26px;background:#303030;"></div>
<div style="left:324.5px;top:592px;width:1px;height:26px;background:#303030;"></div>
<div style="left:352.5px;top:592px;width:1px;height:26px;background:#303030;"></div>
<div style="left:1px;top:171.5px;width:34px;height:1px;background:#303030;"></div>
<div style="left:1px;top:253.5px;width:34px;height:1px;background:#303030;"></div>
<div style="left:1px;top:289.5px;width:34px;height:1px;background:#303030;"></div>
<div style="left:1px;top:363.5px;width:34px;height:1px;background:#303030;"></div>
<div style="left:1px;top:445.5px;width:34px;height:1px;background:#303030;"></div>
<div style="left:1px;top:481.5px;width:34px;height:1px;background:#303030;"></div>
<div style="left:1px;top:555.5px;width:34px;height:1px;background:#303030;"></div>
<div style="left:1px;top:591.5px;width:34px;height:1px;background:#303030;"></div>
<div style="left:827px;top:171.5px;width:34px;height:1px;background:#303030;"></div>
<div style="left:827px;top:208.0px;width:34px;height:1px;background:#303030;"></div>
<div style="left:827px;top:289.5px;width:34px;height:1px;background:#303030;"></div>
<div style="left:827px;top:325.5px;width:34px;height:1px;background:#303030;"></div>
<div style="left:827px;top:400.5px;width:34px;height:1px;background:#303030;"></div>
<div style="left:827px;top:521.0px;width:34px;height:1px;background:#303030;"></div>
<div style="left:827px;top:556.5px;width:34px;height:1px;background:#303030;"></div>
<svg style="position:absolute;left:38px;top:88px" width="5" height="24"><rect x="0" y="0" width="1" height="1" fill="#444"/><rect x="3" y="1.5" width="1" height="1" fill="#444"/><rect x="0" y="3" width="1" height="1" fill="#444"/><rect x="3" y="4.5" width="1" height="1" fill="#444"/><rect x="0" y="6" width="1" height="1" fill="#444"/><rect x="3" y="7.5" width="1" height="1" fill="#444"/><rect x="0" y="9" width="1" height="1" fill="#444"/><rect x="3" y="10.5" width="1" height="1" fill="#444"/><rect x="0" y="12" width="1" height="1" fill="#444"/><rect x="3" y="13.5" width="1" height="1" fill="#444"/><rect x="0" y="15" width="1" height="1" fill="#444"/><rect x="3" y="16.5" width="1" height="1" fill="#444"/><rect x="0" y="18" width="1" height="1" fill="#444"/><rect x="3" y="19.5" width="1" height="1" fill="#444"/><rect x="0" y="21" width="1" height="1" fill="#444"/><rect x="3" y="22.5" width="1" height="1" fill="#444"/></svg></div></body></html>
